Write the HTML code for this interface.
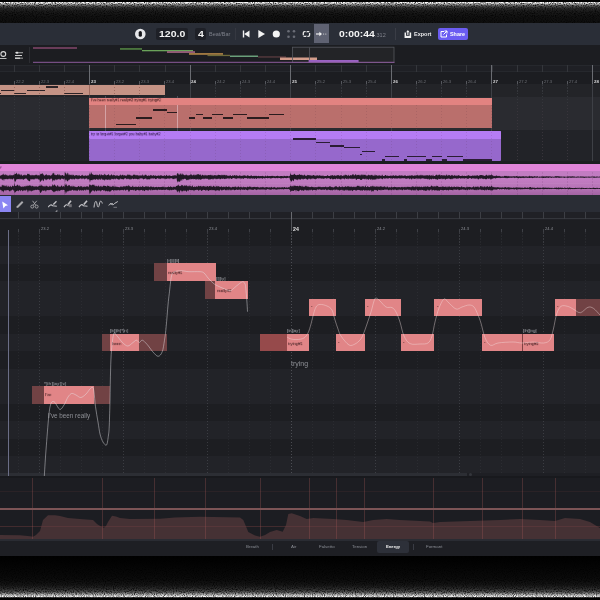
<!DOCTYPE html><html><head><meta charset="utf-8"><style>
html,body{margin:0;padding:0;width:600px;height:600px;overflow:hidden;background:#000;font-family:"Liberation Sans", sans-serif;}
div{box-sizing:border-box;}
</style></head><body><div style="position:relative;width:600px;height:600px;overflow:hidden;background:#000">
<div style="position:absolute;left:0;top:0;width:600px;height:23px;background:linear-gradient(to bottom,#000 0px,#000 1.8px,#ffffff 2.3px,#f0f0f0 3px,#b0b0b0 4px,#7a7a7a 5px,#4c4c4c 6.5px,#2e2e2e 8px,#1c1c1c 11px,#121212 16px,#0e0e0e 23px)"></div>
<svg style="position:absolute;left:0;top:0;mix-blend-mode:multiply" width="600" height="23"><filter id="nz1" x="0" y="0" width="100%" height="100%"><feTurbulence type="fractalNoise" baseFrequency="0.9" numOctaves="1" seed="3"/><feColorMatrix type="matrix" values="0 0 0 0 0  0 0 0 0 0  0 0 0 0 0  0 0 0 -2.2 1.3"/></filter><rect width="600" height="23" fill="#fff"/><rect width="600" height="23" filter="url(#nz1)" fill="#000"/></svg>
<div style="position:absolute;left:0px;top:23px;width:600px;height:22px;background:#2a2e37;"></div>
<svg style="position:absolute;left:0;top:0" width="600" height="600"><circle cx="140.3" cy="34" r="5.3" fill="#e6e7ea"/><rect x="138.7" y="31" width="3.2" height="5.8" rx="1.6" fill="#15161a"/><rect x="242.8" y="30.5" width="1.4" height="7" fill="#f0f0f0"/><path d="M249.5 30.5 L244.2 34 L249.5 37.5 Z" fill="#f0f0f0"/><path d="M258.3 30 L265 34 L258.3 38 Z" fill="#f4f4f4"/><circle cx="276.3" cy="34" r="3.6" fill="#f4f4f4"/><circle cx="288.5" cy="31.2" r="1.3" fill="#6a6d76"/><circle cx="294" cy="31.2" r="1.3" fill="#6a6d76"/><circle cx="288.5" cy="36.8" r="1.3" fill="#6a6d76"/><circle cx="294" cy="36.8" r="1.3" fill="#6a6d76"/><path d="M303.3 35.2 V33 Q303.3 31.7 304.6 31.7 H309.3" stroke="#e8e8e8" stroke-width="1.3" fill="none"/><path d="M309.6 32.9 V35.1 Q309.6 36.4 308.3 36.4 H303.5" stroke="#e8e8e8" stroke-width="1.3" fill="none"/><path d="M305 30.6 L306.6 31.7 L305 32.8" stroke="#2a2e37" stroke-width="0.8" fill="none"/><path d="M308 35.3 L306.4 36.4 L308 37.5" stroke="#2a2e37" stroke-width="0.8" fill="none"/></svg>
<div style="position:absolute;left:314px;top:24px;width:15px;height:19px;background:#5f6272;"></div>
<svg style="position:absolute;left:314px;top:24px" width="15" height="19"><path d="M2 10 H6.5" stroke="#f0f0f0" stroke-width="1.2"/><path d="M5.4 7.8 L8 10 L5.4 12.2 Z" fill="#f4f4f4"/><circle cx="9.6" cy="10" r="0.6" fill="#ddd"/><circle cx="11.8" cy="10" r="0.6" fill="#ddd"/></svg>
<div style="position:absolute;left:156px;top:28px;width:32px;height:12px;background:#1e2027;border-radius:2px"></div>
<div style="position:absolute;left:159.2px;top:29.4px;font-size:9.6px;line-height:9.6px;color:#f2f2f2;font-weight:bold;white-space:nowrap;will-change:transform;transform:scaleX(1.1);transform-origin:0 0;">120.0</div>
<div style="position:absolute;left:194.5px;top:28px;width:11.5px;height:12px;background:#1e2027;border-radius:2px"></div>
<div style="position:absolute;left:197.5px;top:29.4px;font-size:9.6px;line-height:9.6px;color:#f2f2f2;font-weight:bold;white-space:nowrap;will-change:transform;transform:scaleX(1.1);transform-origin:0 0;">4</div>
<div style="position:absolute;left:234.5px;top:28px;width:0.8px;height:12px;background:#353841;"></div>
<div style="position:absolute;left:208.5px;top:31.5px;font-size:5.5px;line-height:5.5px;color:#7d808a;font-weight:normal;white-space:nowrap;will-change:transform;">Beat/Bar</div>
<div style="position:absolute;left:339px;top:29.4px;font-size:9.6px;line-height:9.6px;color:#f4f4f4;font-weight:bold;white-space:nowrap;will-change:transform;transform:scaleX(1.085);transform-origin:0 0;">0:00:44</div>
<div style="position:absolute;left:375px;top:33px;font-size:5.5px;line-height:5.5px;color:#80838c;font-weight:normal;white-space:nowrap;will-change:transform;">.312</div>
<div style="position:absolute;left:395px;top:28px;width:1px;height:12px;background:#3a3d46;"></div>
<svg style="position:absolute;left:0;top:0" width="600" height="60"><path d="M405.3 32.6 V37.2 H410.4 V32.6" stroke="#f0f0f0" stroke-width="1.5" fill="none"/><rect x="405" y="35.8" width="5.8" height="2" fill="#f0f0f0"/><path d="M407.85 35 V31" stroke="#f0f0f0" stroke-width="1.1"/><path d="M406.2 32.2 L407.85 30 L409.5 32.2 Z" fill="#f0f0f0"/></svg>
<div style="position:absolute;left:413.7px;top:32px;font-size:5.5px;line-height:5.5px;color:#e8e8ea;font-weight:bold;white-space:nowrap;will-change:transform;">Export</div>
<div style="position:absolute;left:437.5px;top:28px;width:30.5px;height:12px;background:#6b5cf2;border-radius:2px"></div>
<svg style="position:absolute;left:440px;top:30px" width="8" height="8"><path d="M1 1.5 H4 M1 1.5 V7 H6.5 V4.5 M4.5 1 H7 V3.5 M7 1 L3.5 4.5" stroke="#fff" stroke-width="1" fill="none"/></svg>
<div style="position:absolute;left:450px;top:32px;font-size:5.4px;line-height:5.4px;color:#ffffff;font-weight:bold;white-space:nowrap;will-change:transform;">Share</div>
<div style="position:absolute;left:0px;top:45px;width:600px;height:20px;background:#1c1d21;"></div>
<svg style="position:absolute;left:0;top:45px" width="600" height="20"><circle cx="3.3" cy="9" r="2.4" stroke="#d8d8d8" stroke-width="1.1" fill="none"/><rect x="0" y="13" width="6.5" height="0.9" fill="#cfcfcf"/><rect x="15" y="7.3" width="8" height="0.9" fill="#bdbdbd"/><rect x="16" y="6.8" width="2.2" height="1.8" fill="#e0e0e0"/><rect x="15" y="10" width="7" height="1" fill="#cfcfcf"/><rect x="15" y="12.6" width="8" height="1.2" fill="#8d8d8d"/><rect x="15" y="12.6" width="5" height="1.2" fill="#dcdcdc"/><rect x="29" y="2" width="1" height="16" fill="#2c2d32"/><rect x="33" y="2.3" width="44" height="1.4" fill="#8a4a72"/><rect x="120" y="3.3" width="22" height="1.3" fill="#5e9a4a"/><rect x="142" y="5" width="51" height="1.3" fill="#6aa35a"/><rect x="167" y="6.3" width="28" height="1.5" fill="#b06a8c"/><rect x="189" y="8.2" width="34" height="1.5" fill="#c0904a"/><rect x="207.5" y="9.8" width="22.5" height="1.3" fill="#6e6a3a"/><rect x="230" y="10.5" width="28" height="1.5" fill="#6aa07a"/><rect x="258" y="11.3" width="28" height="1.3" fill="#5a3c40"/><rect x="280" y="12.5" width="37" height="2.5" fill="#d29a88"/><rect x="292.5" y="2.2" width="101.5" height="15.2" fill="rgba(255,255,255,0.03)" stroke="#55575e" stroke-width="0.8"/><rect x="309" y="2.5" width="0.8" height="15" fill="#55575e"/><rect x="308.6" y="15" width="50" height="2.4" fill="#9a62c4"/><rect x="33" y="16.8" width="361.5" height="1" fill="#8c5a9c"/></svg>
<div style="position:absolute;left:0px;top:65px;width:600px;height:7px;background:#1f2025;"></div>
<div style="position:absolute;left:0px;top:65.2px;width:600px;height:1px;background:#26282d;"></div>
<div style="position:absolute;left:0px;top:71px;width:600px;height:1px;background:#26282d;"></div>
<div style="position:absolute;left:13.65px;top:65px;width:0.8px;height:7px;background:#34363b;"></div>
<div style="position:absolute;left:38.800000000000004px;top:65px;width:0.8px;height:7px;background:#34363b;"></div>
<div style="position:absolute;left:63.949999999999996px;top:65px;width:0.8px;height:7px;background:#34363b;"></div>
<div style="position:absolute;left:89.09999999999998px;top:65px;width:0.8px;height:7px;background:#34363b;"></div>
<div style="position:absolute;left:114.24999999999999px;top:65px;width:0.8px;height:7px;background:#34363b;"></div>
<div style="position:absolute;left:139.4px;top:65px;width:0.8px;height:7px;background:#34363b;"></div>
<div style="position:absolute;left:164.54999999999998px;top:65px;width:0.8px;height:7px;background:#34363b;"></div>
<div style="position:absolute;left:189.7px;top:65px;width:0.8px;height:7px;background:#34363b;"></div>
<div style="position:absolute;left:214.85px;top:65px;width:0.8px;height:7px;background:#34363b;"></div>
<div style="position:absolute;left:240.0px;top:65px;width:0.8px;height:7px;background:#34363b;"></div>
<div style="position:absolute;left:265.15000000000003px;top:65px;width:0.8px;height:7px;background:#34363b;"></div>
<div style="position:absolute;left:290.3px;top:65px;width:0.8px;height:7px;background:#34363b;"></div>
<div style="position:absolute;left:315.45px;top:65px;width:0.8px;height:7px;background:#34363b;"></div>
<div style="position:absolute;left:340.6px;top:65px;width:0.8px;height:7px;background:#34363b;"></div>
<div style="position:absolute;left:365.75px;top:65px;width:0.8px;height:7px;background:#34363b;"></div>
<div style="position:absolute;left:390.90000000000003px;top:65px;width:0.8px;height:7px;background:#34363b;"></div>
<div style="position:absolute;left:416.05px;top:65px;width:0.8px;height:7px;background:#34363b;"></div>
<div style="position:absolute;left:441.2px;top:65px;width:0.8px;height:7px;background:#34363b;"></div>
<div style="position:absolute;left:466.35px;top:65px;width:0.8px;height:7px;background:#34363b;"></div>
<div style="position:absolute;left:491.5px;top:65px;width:0.8px;height:7px;background:#34363b;"></div>
<div style="position:absolute;left:516.65px;top:65px;width:0.8px;height:7px;background:#34363b;"></div>
<div style="position:absolute;left:541.8px;top:65px;width:0.8px;height:7px;background:#34363b;"></div>
<div style="position:absolute;left:566.9499999999999px;top:65px;width:0.8px;height:7px;background:#34363b;"></div>
<div style="position:absolute;left:592.0999999999999px;top:65px;width:0.8px;height:7px;background:#34363b;"></div>
<div style="position:absolute;left:0px;top:72px;width:600px;height:12px;background:#1c1d21;"></div>
<div style="position:absolute;left:13.550000000000004px;top:81px;width:1px;height:3px;background:#55575d;"></div>
<div style="position:absolute;left:15.550000000000004px;top:79.9px;font-size:4.2px;line-height:4.2px;color:#6c6e74;font-weight:normal;white-space:nowrap;will-change:transform;">22.2</div>
<div style="position:absolute;left:38.7px;top:81px;width:1px;height:3px;background:#55575d;"></div>
<div style="position:absolute;left:40.7px;top:79.9px;font-size:4.2px;line-height:4.2px;color:#6c6e74;font-weight:normal;white-space:nowrap;will-change:transform;">22.3</div>
<div style="position:absolute;left:63.849999999999994px;top:81px;width:1px;height:3px;background:#55575d;"></div>
<div style="position:absolute;left:65.85px;top:79.9px;font-size:4.2px;line-height:4.2px;color:#6c6e74;font-weight:normal;white-space:nowrap;will-change:transform;">22.4</div>
<div style="position:absolute;left:89.0px;top:65px;width:1px;height:19px;background:#6a6c72;"></div>
<div style="position:absolute;left:90.7px;top:79.8px;font-size:4.4px;line-height:4.4px;color:#d8d8da;font-weight:bold;white-space:nowrap;will-change:transform;">23</div>
<div style="position:absolute;left:114.15px;top:81px;width:1px;height:3px;background:#55575d;"></div>
<div style="position:absolute;left:116.15px;top:79.9px;font-size:4.2px;line-height:4.2px;color:#6c6e74;font-weight:normal;white-space:nowrap;will-change:transform;">23.2</div>
<div style="position:absolute;left:139.3px;top:81px;width:1px;height:3px;background:#55575d;"></div>
<div style="position:absolute;left:141.3px;top:79.9px;font-size:4.2px;line-height:4.2px;color:#6c6e74;font-weight:normal;white-space:nowrap;will-change:transform;">23.3</div>
<div style="position:absolute;left:164.45px;top:81px;width:1px;height:3px;background:#55575d;"></div>
<div style="position:absolute;left:166.45px;top:79.9px;font-size:4.2px;line-height:4.2px;color:#6c6e74;font-weight:normal;white-space:nowrap;will-change:transform;">23.4</div>
<div style="position:absolute;left:189.6px;top:65px;width:1px;height:19px;background:#6a6c72;"></div>
<div style="position:absolute;left:191.29999999999998px;top:79.8px;font-size:4.4px;line-height:4.4px;color:#d8d8da;font-weight:bold;white-space:nowrap;will-change:transform;">24</div>
<div style="position:absolute;left:214.75px;top:81px;width:1px;height:3px;background:#55575d;"></div>
<div style="position:absolute;left:216.75px;top:79.9px;font-size:4.2px;line-height:4.2px;color:#6c6e74;font-weight:normal;white-space:nowrap;will-change:transform;">24.2</div>
<div style="position:absolute;left:239.89999999999998px;top:81px;width:1px;height:3px;background:#55575d;"></div>
<div style="position:absolute;left:241.89999999999998px;top:79.9px;font-size:4.2px;line-height:4.2px;color:#6c6e74;font-weight:normal;white-space:nowrap;will-change:transform;">24.3</div>
<div style="position:absolute;left:265.04999999999995px;top:81px;width:1px;height:3px;background:#55575d;"></div>
<div style="position:absolute;left:267.04999999999995px;top:79.9px;font-size:4.2px;line-height:4.2px;color:#6c6e74;font-weight:normal;white-space:nowrap;will-change:transform;">24.4</div>
<div style="position:absolute;left:290.2px;top:65px;width:1px;height:19px;background:#6a6c72;"></div>
<div style="position:absolute;left:291.9px;top:79.8px;font-size:4.4px;line-height:4.4px;color:#d8d8da;font-weight:bold;white-space:nowrap;will-change:transform;">25</div>
<div style="position:absolute;left:315.34999999999997px;top:81px;width:1px;height:3px;background:#55575d;"></div>
<div style="position:absolute;left:317.34999999999997px;top:79.9px;font-size:4.2px;line-height:4.2px;color:#6c6e74;font-weight:normal;white-space:nowrap;will-change:transform;">25.2</div>
<div style="position:absolute;left:340.5px;top:81px;width:1px;height:3px;background:#55575d;"></div>
<div style="position:absolute;left:342.5px;top:79.9px;font-size:4.2px;line-height:4.2px;color:#6c6e74;font-weight:normal;white-space:nowrap;will-change:transform;">25.3</div>
<div style="position:absolute;left:365.65px;top:81px;width:1px;height:3px;background:#55575d;"></div>
<div style="position:absolute;left:367.65px;top:79.9px;font-size:4.2px;line-height:4.2px;color:#6c6e74;font-weight:normal;white-space:nowrap;will-change:transform;">25.4</div>
<div style="position:absolute;left:390.79999999999995px;top:65px;width:1px;height:19px;background:#6a6c72;"></div>
<div style="position:absolute;left:392.49999999999994px;top:79.8px;font-size:4.4px;line-height:4.4px;color:#d8d8da;font-weight:bold;white-space:nowrap;will-change:transform;">26</div>
<div style="position:absolute;left:415.94999999999993px;top:81px;width:1px;height:3px;background:#55575d;"></div>
<div style="position:absolute;left:417.94999999999993px;top:79.9px;font-size:4.2px;line-height:4.2px;color:#6c6e74;font-weight:normal;white-space:nowrap;will-change:transform;">26.2</div>
<div style="position:absolute;left:441.09999999999997px;top:81px;width:1px;height:3px;background:#55575d;"></div>
<div style="position:absolute;left:443.09999999999997px;top:79.9px;font-size:4.2px;line-height:4.2px;color:#6c6e74;font-weight:normal;white-space:nowrap;will-change:transform;">26.3</div>
<div style="position:absolute;left:466.24999999999994px;top:81px;width:1px;height:3px;background:#55575d;"></div>
<div style="position:absolute;left:468.24999999999994px;top:79.9px;font-size:4.2px;line-height:4.2px;color:#6c6e74;font-weight:normal;white-space:nowrap;will-change:transform;">26.4</div>
<div style="position:absolute;left:491.4px;top:65px;width:1px;height:19px;background:#6a6c72;"></div>
<div style="position:absolute;left:493.09999999999997px;top:79.8px;font-size:4.4px;line-height:4.4px;color:#d8d8da;font-weight:bold;white-space:nowrap;will-change:transform;">27</div>
<div style="position:absolute;left:516.55px;top:81px;width:1px;height:3px;background:#55575d;"></div>
<div style="position:absolute;left:518.55px;top:79.9px;font-size:4.2px;line-height:4.2px;color:#6c6e74;font-weight:normal;white-space:nowrap;will-change:transform;">27.2</div>
<div style="position:absolute;left:541.6999999999999px;top:81px;width:1px;height:3px;background:#55575d;"></div>
<div style="position:absolute;left:543.6999999999999px;top:79.9px;font-size:4.2px;line-height:4.2px;color:#6c6e74;font-weight:normal;white-space:nowrap;will-change:transform;">27.3</div>
<div style="position:absolute;left:566.8499999999999px;top:81px;width:1px;height:3px;background:#55575d;"></div>
<div style="position:absolute;left:568.8499999999999px;top:79.9px;font-size:4.2px;line-height:4.2px;color:#6c6e74;font-weight:normal;white-space:nowrap;will-change:transform;">27.4</div>
<div style="position:absolute;left:592.0px;top:65px;width:1px;height:19px;background:#6a6c72;"></div>
<div style="position:absolute;left:593.7px;top:79.8px;font-size:4.4px;line-height:4.4px;color:#d8d8da;font-weight:bold;white-space:nowrap;will-change:transform;">28</div>
<div style="position:absolute;left:0px;top:84px;width:600px;height:12.5px;background:#232428;"></div>
<div style="position:absolute;left:0px;top:96.5px;width:600px;height:33.5px;background:#2a2b30;"></div>
<div style="position:absolute;left:0px;top:130px;width:600px;height:33px;background:#222328;"></div>
<div style="position:absolute;left:13.550000000000004px;top:84px;width:1px;height:79px;background:repeating-linear-gradient(to bottom,#35373c 0 1.5px,transparent 1.5px 3px)"></div>
<div style="position:absolute;left:38.7px;top:84px;width:1px;height:79px;background:repeating-linear-gradient(to bottom,#35373c 0 1.5px,transparent 1.5px 3px)"></div>
<div style="position:absolute;left:63.849999999999994px;top:84px;width:1px;height:79px;background:repeating-linear-gradient(to bottom,#35373c 0 1.5px,transparent 1.5px 3px)"></div>
<div style="position:absolute;left:89.0px;top:84px;width:1px;height:79px;background:#3e4046;"></div>
<div style="position:absolute;left:114.15px;top:84px;width:1px;height:79px;background:repeating-linear-gradient(to bottom,#35373c 0 1.5px,transparent 1.5px 3px)"></div>
<div style="position:absolute;left:139.3px;top:84px;width:1px;height:79px;background:repeating-linear-gradient(to bottom,#35373c 0 1.5px,transparent 1.5px 3px)"></div>
<div style="position:absolute;left:164.45px;top:84px;width:1px;height:79px;background:repeating-linear-gradient(to bottom,#35373c 0 1.5px,transparent 1.5px 3px)"></div>
<div style="position:absolute;left:189.6px;top:84px;width:1px;height:79px;background:#3e4046;"></div>
<div style="position:absolute;left:214.75px;top:84px;width:1px;height:79px;background:repeating-linear-gradient(to bottom,#35373c 0 1.5px,transparent 1.5px 3px)"></div>
<div style="position:absolute;left:239.89999999999998px;top:84px;width:1px;height:79px;background:repeating-linear-gradient(to bottom,#35373c 0 1.5px,transparent 1.5px 3px)"></div>
<div style="position:absolute;left:265.04999999999995px;top:84px;width:1px;height:79px;background:repeating-linear-gradient(to bottom,#35373c 0 1.5px,transparent 1.5px 3px)"></div>
<div style="position:absolute;left:290.2px;top:84px;width:1px;height:79px;background:#3e4046;"></div>
<div style="position:absolute;left:315.34999999999997px;top:84px;width:1px;height:79px;background:repeating-linear-gradient(to bottom,#35373c 0 1.5px,transparent 1.5px 3px)"></div>
<div style="position:absolute;left:340.5px;top:84px;width:1px;height:79px;background:repeating-linear-gradient(to bottom,#35373c 0 1.5px,transparent 1.5px 3px)"></div>
<div style="position:absolute;left:365.65px;top:84px;width:1px;height:79px;background:repeating-linear-gradient(to bottom,#35373c 0 1.5px,transparent 1.5px 3px)"></div>
<div style="position:absolute;left:390.79999999999995px;top:84px;width:1px;height:79px;background:#3e4046;"></div>
<div style="position:absolute;left:415.94999999999993px;top:84px;width:1px;height:79px;background:repeating-linear-gradient(to bottom,#35373c 0 1.5px,transparent 1.5px 3px)"></div>
<div style="position:absolute;left:441.09999999999997px;top:84px;width:1px;height:79px;background:repeating-linear-gradient(to bottom,#35373c 0 1.5px,transparent 1.5px 3px)"></div>
<div style="position:absolute;left:466.24999999999994px;top:84px;width:1px;height:79px;background:repeating-linear-gradient(to bottom,#35373c 0 1.5px,transparent 1.5px 3px)"></div>
<div style="position:absolute;left:491.4px;top:84px;width:1px;height:79px;background:#3e4046;"></div>
<div style="position:absolute;left:516.55px;top:84px;width:1px;height:79px;background:repeating-linear-gradient(to bottom,#35373c 0 1.5px,transparent 1.5px 3px)"></div>
<div style="position:absolute;left:541.6999999999999px;top:84px;width:1px;height:79px;background:repeating-linear-gradient(to bottom,#35373c 0 1.5px,transparent 1.5px 3px)"></div>
<div style="position:absolute;left:566.8499999999999px;top:84px;width:1px;height:79px;background:repeating-linear-gradient(to bottom,#35373c 0 1.5px,transparent 1.5px 3px)"></div>
<div style="position:absolute;left:592.0px;top:84px;width:1px;height:79px;background:#3e4046;"></div>
<div style="position:absolute;left:0px;top:85px;width:165px;height:9.8px;background:#c59385;"></div>
<div style="position:absolute;left:0px;top:92.75px;width:1.2px;height:1.5px;background:#2c2326;"></div>
<div style="position:absolute;left:1.3px;top:89.85px;width:12.7px;height:1.5px;background:#2c2326;"></div>
<div style="position:absolute;left:14px;top:92.75px;width:12px;height:1.5px;background:#2c2326;"></div>
<div style="position:absolute;left:27px;top:89.85px;width:18px;height:1.5px;background:#2c2326;"></div>
<div style="position:absolute;left:46px;top:86.35px;width:12px;height:1.5px;background:#2c2326;"></div>
<div style="position:absolute;left:64.4px;top:92.75px;width:18.599999999999994px;height:1.5px;background:#2c2326;"></div>
<div style="position:absolute;left:13.5px;top:84.4px;width:1px;height:10.6px;background:repeating-linear-gradient(to bottom,rgba(120,70,60,0.5) 0 1.5px,transparent 1.5px 3px)"></div>
<div style="position:absolute;left:38.5px;top:84.4px;width:1px;height:10.6px;background:repeating-linear-gradient(to bottom,rgba(120,70,60,0.5) 0 1.5px,transparent 1.5px 3px)"></div>
<div style="position:absolute;left:63.5px;top:84.4px;width:1px;height:10.6px;background:repeating-linear-gradient(to bottom,rgba(120,70,60,0.5) 0 1.5px,transparent 1.5px 3px)"></div>
<div style="position:absolute;left:114.0px;top:84.4px;width:1px;height:10.6px;background:repeating-linear-gradient(to bottom,rgba(120,70,60,0.5) 0 1.5px,transparent 1.5px 3px)"></div>
<div style="position:absolute;left:139.0px;top:84.4px;width:1px;height:10.6px;background:repeating-linear-gradient(to bottom,rgba(120,70,60,0.5) 0 1.5px,transparent 1.5px 3px)"></div>
<div style="position:absolute;left:89px;top:85px;width:1px;height:9.8px;background:rgba(120,70,60,0.5);"></div>
<div style="position:absolute;left:89px;top:97.8px;width:403px;height:30.4px;background:#ba6f6c;"></div>
<div style="position:absolute;left:89px;top:97.8px;width:403px;height:7.4px;background:#e28381;"></div>
<div style="position:absolute;left:90.5px;top:99.4px;font-size:4.6px;line-height:4.6px;color:#2a1010;font-weight:normal;white-space:nowrap;will-change:transform;transform:scale(0.79);transform-origin:0 0;">I've been really#1 really#2 trying#1 trying#2</div>
<div style="position:absolute;left:105.1px;top:95.5px;width:1px;height:2.5px;background:#4a4c58;"></div>
<div style="position:absolute;left:105.1px;top:128.4px;width:1px;height:2.6px;background:#4a4c58;"></div>
<div style="position:absolute;left:105.1px;top:105.2px;width:1px;height:23.2px;background:rgba(245,225,235,0.45);"></div>
<div style="position:absolute;left:177.1px;top:95.5px;width:1px;height:2.5px;background:#4a4c58;"></div>
<div style="position:absolute;left:177.1px;top:128.4px;width:1px;height:2.6px;background:#4a4c58;"></div>
<div style="position:absolute;left:177.1px;top:105.2px;width:1px;height:23.2px;background:rgba(245,225,235,0.45);"></div>
<div style="position:absolute;left:116px;top:123.8px;width:20px;height:1.6px;background:#2a1c1e;"></div>
<div style="position:absolute;left:136px;top:117.2px;width:16px;height:1.6px;background:#2a1c1e;"></div>
<div style="position:absolute;left:153px;top:109.2px;width:14px;height:1.6px;background:#2a1c1e;"></div>
<div style="position:absolute;left:167px;top:111.8px;width:10px;height:1.6px;background:#2a1c1e;"></div>
<div style="position:absolute;left:188.5px;top:117.2px;width:6.699999999999989px;height:1.6px;background:#2a1c1e;"></div>
<div style="position:absolute;left:195.5px;top:113.7px;width:7.5px;height:1.6px;background:#2a1c1e;"></div>
<div style="position:absolute;left:203px;top:117.2px;width:9px;height:1.6px;background:#2a1c1e;"></div>
<div style="position:absolute;left:212px;top:113.7px;width:11px;height:1.6px;background:#2a1c1e;"></div>
<div style="position:absolute;left:223px;top:117.2px;width:10px;height:1.6px;background:#2a1c1e;"></div>
<div style="position:absolute;left:233px;top:113.7px;width:14px;height:1.6px;background:#2a1c1e;"></div>
<div style="position:absolute;left:247px;top:117.2px;width:22px;height:1.6px;background:#2a1c1e;"></div>
<div style="position:absolute;left:269px;top:113.7px;width:15px;height:1.6px;background:#2a1c1e;"></div>
<div style="position:absolute;left:89px;top:131px;width:412px;height:30px;background:#9668cc;border-radius:1px"></div>
<div style="position:absolute;left:89px;top:131px;width:412px;height:7.5px;background:#b57cf4;border-radius:1px 1px 0 0"></div>
<div style="position:absolute;left:90.5px;top:132.8px;font-size:4.6px;line-height:4.6px;color:#1e0c30;font-weight:normal;white-space:nowrap;will-change:transform;transform:scale(0.79);transform-origin:0 0;">try to forget#1 forget#2 you baby#1 baby#2</div>
<div style="position:absolute;left:292.5px;top:138.2px;width:23.0px;height:1.6px;background:#2a1c34;"></div>
<div style="position:absolute;left:315.5px;top:141.7px;width:14.5px;height:1.6px;background:#2a1c34;"></div>
<div style="position:absolute;left:330px;top:145.0px;width:13.5px;height:1.6px;background:#2a1c34;"></div>
<div style="position:absolute;left:344px;top:146.89999999999998px;width:16px;height:1.6px;background:#2a1c34;"></div>
<div style="position:absolute;left:360px;top:153.79999999999998px;width:1.5px;height:1.6px;background:#2a1c34;"></div>
<div style="position:absolute;left:362.4px;top:150.7px;width:12.600000000000023px;height:1.6px;background:#2a1c34;"></div>
<div style="position:absolute;left:381.6px;top:159.2px;width:3.3999999999999773px;height:1.6px;background:#2a1c34;"></div>
<div style="position:absolute;left:385px;top:155.89999999999998px;width:14px;height:1.6px;background:#2a1c34;"></div>
<div style="position:absolute;left:404px;top:159.2px;width:3px;height:1.6px;background:#2a1c34;"></div>
<div style="position:absolute;left:407px;top:155.89999999999998px;width:19px;height:1.6px;background:#2a1c34;"></div>
<div style="position:absolute;left:426px;top:159.2px;width:6px;height:1.6px;background:#2a1c34;"></div>
<div style="position:absolute;left:432px;top:155.89999999999998px;width:10px;height:1.6px;background:#2a1c34;"></div>
<div style="position:absolute;left:442px;top:159.2px;width:5px;height:1.6px;background:#2a1c34;"></div>
<div style="position:absolute;left:447px;top:155.89999999999998px;width:16px;height:1.6px;background:#2a1c34;"></div>
<div style="position:absolute;left:463px;top:159.2px;width:29px;height:1.6px;background:#2a1c34;"></div>
<div style="position:absolute;left:89.0px;top:105px;width:1px;height:56px;background:repeating-linear-gradient(to bottom,rgba(80,40,60,0.14) 0 1.5px,transparent 1.5px 3px)"></div>
<div style="position:absolute;left:114.15px;top:105px;width:1px;height:56px;background:repeating-linear-gradient(to bottom,rgba(80,40,60,0.14) 0 1.5px,transparent 1.5px 3px)"></div>
<div style="position:absolute;left:139.3px;top:105px;width:1px;height:56px;background:repeating-linear-gradient(to bottom,rgba(80,40,60,0.14) 0 1.5px,transparent 1.5px 3px)"></div>
<div style="position:absolute;left:164.45px;top:105px;width:1px;height:56px;background:repeating-linear-gradient(to bottom,rgba(80,40,60,0.14) 0 1.5px,transparent 1.5px 3px)"></div>
<div style="position:absolute;left:189.6px;top:105px;width:1px;height:56px;background:repeating-linear-gradient(to bottom,rgba(80,40,60,0.14) 0 1.5px,transparent 1.5px 3px)"></div>
<div style="position:absolute;left:214.75px;top:105px;width:1px;height:56px;background:repeating-linear-gradient(to bottom,rgba(80,40,60,0.14) 0 1.5px,transparent 1.5px 3px)"></div>
<div style="position:absolute;left:239.89999999999998px;top:105px;width:1px;height:56px;background:repeating-linear-gradient(to bottom,rgba(80,40,60,0.14) 0 1.5px,transparent 1.5px 3px)"></div>
<div style="position:absolute;left:265.04999999999995px;top:105px;width:1px;height:56px;background:repeating-linear-gradient(to bottom,rgba(80,40,60,0.14) 0 1.5px,transparent 1.5px 3px)"></div>
<div style="position:absolute;left:290.2px;top:105px;width:1px;height:56px;background:repeating-linear-gradient(to bottom,rgba(80,40,60,0.14) 0 1.5px,transparent 1.5px 3px)"></div>
<div style="position:absolute;left:315.34999999999997px;top:105px;width:1px;height:56px;background:repeating-linear-gradient(to bottom,rgba(80,40,60,0.14) 0 1.5px,transparent 1.5px 3px)"></div>
<div style="position:absolute;left:340.5px;top:105px;width:1px;height:56px;background:repeating-linear-gradient(to bottom,rgba(80,40,60,0.14) 0 1.5px,transparent 1.5px 3px)"></div>
<div style="position:absolute;left:365.65px;top:105px;width:1px;height:56px;background:repeating-linear-gradient(to bottom,rgba(80,40,60,0.14) 0 1.5px,transparent 1.5px 3px)"></div>
<div style="position:absolute;left:390.79999999999995px;top:105px;width:1px;height:56px;background:repeating-linear-gradient(to bottom,rgba(80,40,60,0.14) 0 1.5px,transparent 1.5px 3px)"></div>
<div style="position:absolute;left:415.94999999999993px;top:105px;width:1px;height:56px;background:repeating-linear-gradient(to bottom,rgba(80,40,60,0.14) 0 1.5px,transparent 1.5px 3px)"></div>
<div style="position:absolute;left:441.09999999999997px;top:105px;width:1px;height:56px;background:repeating-linear-gradient(to bottom,rgba(80,40,60,0.14) 0 1.5px,transparent 1.5px 3px)"></div>
<div style="position:absolute;left:466.24999999999994px;top:105px;width:1px;height:56px;background:repeating-linear-gradient(to bottom,rgba(80,40,60,0.14) 0 1.5px,transparent 1.5px 3px)"></div>
<div style="position:absolute;left:491.4px;top:105px;width:1px;height:56px;background:repeating-linear-gradient(to bottom,rgba(80,40,60,0.14) 0 1.5px,transparent 1.5px 3px)"></div>
<div style="position:absolute;left:516.55px;top:105px;width:1px;height:56px;background:repeating-linear-gradient(to bottom,rgba(80,40,60,0.14) 0 1.5px,transparent 1.5px 3px)"></div>
<div style="position:absolute;left:541.6999999999999px;top:105px;width:1px;height:56px;background:repeating-linear-gradient(to bottom,rgba(80,40,60,0.14) 0 1.5px,transparent 1.5px 3px)"></div>
<div style="position:absolute;left:566.8499999999999px;top:105px;width:1px;height:56px;background:repeating-linear-gradient(to bottom,rgba(80,40,60,0.14) 0 1.5px,transparent 1.5px 3px)"></div>
<div style="position:absolute;left:0px;top:161px;width:600px;height:2.5px;background:#1c1d21;"></div>
<div style="position:absolute;left:0px;top:163.5px;width:600px;height:31.5px;background:linear-gradient(to bottom,#c27cc2 0px,#c27cc2 16px,#b674b6 24px,#a262a2 31.5px);"></div>
<div style="position:absolute;left:0px;top:163.8px;width:600px;height:7.4px;background:#e084d8;"></div>
<div style="position:absolute;left:0px;top:182.8px;width:600px;height:0.8px;background:rgba(255,255,255,0.05);"></div>
<svg style="position:absolute;left:0;top:166px" width="4" height="4"><path d="M-1 0.6 H2 L0.5 3 Z" fill="#9a5a9a"/></svg>
<svg style="position:absolute;left:0;top:0" width="600" height="600"><path d="M0.0 175.0 L0.5 176.0 L1.0 175.2 L1.5 175.2 L2.0 174.7 L2.5 174.3 L3.0 175.2 L3.5 173.2 L4.0 175.0 L4.5 175.2 L5.0 174.0 L5.5 174.5 L6.0 175.4 L6.5 174.9 L7.0 174.6 L7.5 175.7 L8.0 175.6 L8.5 175.8 L9.0 175.2 L9.5 175.5 L10.0 174.2 L10.5 175.3 L11.0 175.7 L11.5 175.1 L12.0 175.3 L12.5 175.6 L13.0 174.7 L13.5 174.8 L14.0 175.4 L14.5 174.0 L15.0 173.7 L15.5 174.1 L16.0 173.8 L16.5 172.5 L17.0 173.8 L17.5 175.0 L18.0 173.4 L18.5 173.8 L19.0 174.9 L19.5 173.4 L20.0 175.4 L20.5 175.2 L21.0 173.8 L21.5 174.7 L22.0 175.6 L22.5 175.7 L23.0 175.5 L23.5 174.7 L24.0 175.5 L24.5 175.0 L25.0 174.2 L25.5 175.4 L26.0 174.9 L26.5 175.5 L27.0 174.8 L27.5 173.5 L28.0 173.9 L28.5 174.2 L29.0 173.6 L29.5 174.6 L30.0 175.3 L30.5 175.2 L31.0 175.3 L31.5 175.5 L32.0 174.4 L32.5 175.4 L33.0 175.0 L33.5 175.3 L34.0 175.5 L34.5 175.3 L35.0 174.9 L35.5 175.3 L36.0 174.3 L36.5 175.3 L37.0 174.6 L37.5 175.8 L38.0 175.1 L38.5 175.2 L39.0 175.5 L39.5 175.5 L40.0 174.0 L40.5 174.4 L41.0 173.2 L41.5 174.1 L42.0 174.0 L42.5 172.7 L43.0 174.4 L43.5 174.3 L44.0 175.4 L44.5 175.5 L45.0 175.4 L45.5 174.4 L46.0 175.1 L46.5 173.8 L47.0 175.4 L47.5 175.1 L48.0 175.4 L48.5 175.3 L49.0 174.8 L49.5 175.6 L50.0 175.1 L50.5 175.8 L51.0 175.7 L51.5 174.4 L52.0 175.6 L52.5 173.3 L53.0 173.6 L53.5 173.3 L54.0 172.5 L54.5 175.1 L55.0 174.7 L55.5 174.7 L56.0 175.4 L56.5 174.9 L57.0 175.1 L57.5 174.6 L58.0 173.7 L58.5 174.9 L59.0 175.5 L59.5 174.0 L60.0 175.4 L60.5 175.1 L61.0 175.7 L61.5 175.3 L62.0 175.3 L62.5 175.0 L63.0 175.1 L63.5 175.7 L64.0 175.9 L64.5 175.8 L65.0 171.6 L65.5 173.5 L66.0 173.1 L66.5 174.3 L67.0 175.0 L67.5 172.7 L68.0 172.8 L68.5 174.5 L69.0 175.4 L69.5 174.1 L70.0 175.4 L70.5 174.7 L71.0 174.7 L71.5 175.6 L72.0 173.9 L72.5 175.3 L73.0 175.5 L73.5 174.6 L74.0 175.3 L74.5 175.8 L75.0 175.7 L75.5 175.3 L76.0 175.0 L76.5 175.2 L77.0 175.1 L77.5 175.7 L78.0 175.3 L78.5 175.4 L79.0 175.5 L79.5 175.0 L80.0 176.0 L80.5 176.0 L81.0 175.7 L81.5 175.0 L82.0 175.7 L82.5 174.5 L83.0 175.5 L83.5 175.9 L84.0 175.6 L84.5 175.7 L85.0 175.7 L85.5 175.3 L86.0 175.5 L86.5 175.7 L87.0 175.9 L87.5 175.3 L88.0 175.5 L88.5 175.3 L89.0 175.6 L89.5 173.3 L90.0 173.9 L90.5 174.7 L91.0 171.7 L91.5 172.9 L92.0 174.0 L92.5 174.0 L93.0 175.2 L93.5 174.4 L94.0 174.9 L94.5 174.9 L95.0 174.7 L95.5 174.9 L96.0 174.2 L96.5 175.5 L97.0 174.2 L97.5 174.9 L98.0 174.9 L98.5 175.6 L99.0 174.9 L99.5 174.5 L100.0 173.8 L100.5 175.5 L101.0 175.4 L101.5 173.9 L102.0 174.9 L102.5 175.2 L103.0 175.1 L103.5 174.8 L104.0 175.7 L104.5 173.7 L105.0 173.9 L105.5 175.1 L106.0 175.2 L106.5 175.6 L107.0 174.9 L107.5 174.9 L108.0 174.8 L108.5 173.8 L109.0 175.2 L109.5 175.5 L110.0 175.2 L110.5 175.5 L111.0 175.0 L111.5 174.0 L112.0 174.9 L112.5 175.5 L113.0 175.4 L113.5 174.4 L114.0 175.4 L114.5 175.1 L115.0 175.3 L115.5 175.9 L116.0 175.3 L116.5 175.7 L117.0 175.1 L117.5 175.6 L118.0 175.7 L118.5 175.8 L119.0 175.9 L119.5 175.5 L120.0 174.9 L120.5 174.3 L121.0 175.8 L121.5 175.4 L122.0 174.7 L122.5 174.9 L123.0 174.4 L123.5 175.8 L124.0 175.3 L124.5 175.3 L125.0 175.2 L125.5 175.9 L126.0 175.1 L126.5 175.7 L127.0 175.7 L127.5 174.1 L128.0 175.2 L128.5 174.9 L129.0 174.1 L129.5 175.2 L130.0 174.7 L130.5 175.3 L131.0 175.8 L131.5 175.7 L132.0 175.1 L132.5 175.9 L133.0 175.2 L133.5 174.5 L134.0 174.7 L134.5 174.8 L135.0 174.6 L135.5 175.2 L136.0 175.4 L136.5 175.2 L137.0 174.7 L137.5 175.2 L138.0 175.6 L138.5 175.6 L139.0 175.6 L139.5 175.6 L140.0 175.6 L140.5 175.8 L141.0 174.7 L141.5 175.4 L142.0 176.0 L142.5 174.0 L143.0 175.5 L143.5 175.4 L144.0 175.7 L144.5 175.4 L145.0 174.4 L145.5 175.1 L146.0 174.5 L146.5 175.4 L147.0 175.6 L147.5 175.9 L148.0 175.9 L148.5 175.3 L149.0 175.5 L149.5 175.7 L150.0 175.7 L150.5 174.7 L151.0 175.6 L151.5 175.0 L152.0 176.0 L152.5 175.8 L153.0 175.3 L153.5 175.1 L154.0 175.7 L154.5 175.7 L155.0 175.4 L155.5 175.3 L156.0 176.1 L156.5 176.0 L157.0 175.6 L157.5 175.8 L158.0 176.0 L158.5 174.9 L159.0 176.1 L159.5 175.8 L160.0 175.2 L160.5 175.4 L161.0 175.3 L161.5 175.5 L162.0 175.4 L162.5 175.9 L163.0 175.8 L163.5 175.7 L164.0 176.0 L164.5 174.8 L165.0 175.9 L165.5 175.7 L166.0 175.8 L166.5 174.8 L167.0 174.9 L167.5 176.1 L168.0 176.0 L168.5 175.5 L169.0 175.5 L169.5 175.6 L170.0 175.3 L170.5 175.9 L171.0 176.0 L171.5 176.1 L172.0 176.0 L172.5 175.4 L173.0 175.6 L173.5 175.8 L174.0 174.9 L174.5 175.8 L175.0 174.8 L175.5 175.6 L176.0 175.4 L176.5 175.9 L177.0 173.5 L177.5 173.6 L178.0 172.7 L178.5 174.4 L179.0 174.6 L179.5 175.1 L180.0 173.3 L180.5 173.6 L181.0 174.7 L181.5 174.8 L182.0 173.0 L182.5 173.9 L183.0 174.9 L183.5 174.0 L184.0 175.3 L184.5 175.1 L185.0 175.4 L185.5 174.5 L186.0 175.5 L186.5 174.3 L187.0 174.9 L187.5 175.3 L188.0 175.7 L188.5 175.2 L189.0 175.2 L189.5 175.3 L190.0 175.1 L190.5 174.1 L191.0 175.0 L191.5 173.9 L192.0 175.4 L192.5 175.3 L193.0 175.3 L193.5 175.1 L194.0 174.1 L194.5 175.3 L195.0 175.5 L195.5 175.1 L196.0 174.6 L196.5 174.6 L197.0 175.4 L197.5 174.1 L198.0 174.1 L198.5 174.1 L199.0 175.0 L199.5 174.4 L200.0 175.1 L200.5 174.1 L201.0 175.6 L201.5 175.9 L202.0 174.6 L202.5 175.0 L203.0 174.7 L203.5 175.6 L204.0 175.4 L204.5 175.4 L205.0 174.6 L205.5 175.5 L206.0 175.2 L206.5 175.4 L207.0 175.2 L207.5 175.6 L208.0 175.2 L208.5 175.1 L209.0 175.1 L209.5 175.1 L210.0 175.5 L210.5 174.5 L211.0 175.2 L211.5 175.4 L212.0 174.5 L212.5 175.7 L213.0 175.3 L213.5 175.5 L214.0 175.8 L214.5 175.1 L215.0 175.0 L215.5 175.5 L216.0 175.1 L216.5 175.5 L217.0 175.8 L217.5 175.3 L218.0 174.7 L218.5 174.8 L219.0 174.9 L219.5 174.9 L220.0 175.1 L220.5 175.0 L221.0 175.7 L221.5 174.9 L222.0 174.5 L222.5 175.4 L223.0 174.7 L223.5 175.4 L224.0 174.6 L224.5 175.2 L225.0 174.7 L225.5 175.7 L226.0 174.8 L226.5 175.2 L227.0 175.4 L227.5 175.8 L228.0 175.6 L228.5 175.7 L229.0 176.0 L229.5 175.6 L230.0 175.6 L230.5 175.0 L231.0 175.9 L231.5 176.0 L232.0 176.0 L232.5 175.0 L233.0 175.8 L233.5 175.7 L234.0 175.6 L234.5 174.9 L235.0 175.3 L235.5 176.0 L236.0 174.9 L236.5 175.4 L237.0 175.2 L237.5 175.9 L238.0 175.5 L238.5 176.0 L239.0 176.2 L239.5 175.0 L240.0 175.5 L240.5 176.1 L241.0 175.5 L241.5 176.0 L242.0 176.0 L242.5 176.0 L243.0 175.1 L243.5 176.0 L244.0 175.1 L244.5 175.7 L245.0 175.0 L245.5 175.8 L246.0 176.2 L246.5 176.2 L247.0 175.3 L247.5 175.1 L248.0 176.2 L248.5 175.3 L249.0 176.0 L249.5 176.1 L250.0 176.0 L250.5 176.0 L251.0 175.1 L251.5 175.5 L252.0 175.9 L252.5 176.1 L253.0 176.3 L253.5 175.8 L254.0 175.9 L254.5 175.8 L255.0 176.1 L255.5 175.8 L256.0 176.0 L256.5 175.8 L257.0 176.0 L257.5 176.2 L258.0 176.0 L258.5 175.7 L259.0 176.1 L259.5 176.2 L260.0 176.1 L260.5 175.9 L261.0 176.2 L261.5 176.1 L262.0 176.0 L262.5 175.7 L263.0 175.9 L263.5 176.2 L264.0 176.2 L264.5 176.4 L265.0 176.3 L265.5 175.6 L266.0 176.0 L266.5 176.4 L267.0 176.1 L267.5 175.4 L268.0 176.1 L268.5 176.2 L269.0 175.9 L269.5 175.9 L270.0 176.2 L270.5 176.0 L271.0 176.0 L271.5 176.1 L272.0 175.8 L272.5 175.9 L273.0 175.8 L273.5 176.3 L274.0 176.1 L274.5 176.3 L275.0 176.1 L275.5 176.4 L276.0 175.9 L276.5 176.1 L277.0 176.1 L277.5 175.5 L278.0 176.3 L278.5 176.0 L279.0 176.3 L279.5 176.2 L280.0 176.2 L280.5 176.0 L281.0 176.0 L281.5 176.0 L282.0 176.1 L282.5 176.0 L283.0 176.4 L283.5 176.3 L284.0 175.6 L284.5 175.9 L285.0 176.1 L285.5 176.1 L286.0 176.4 L286.5 175.7 L287.0 176.0 L287.5 176.0 L288.0 175.8 L288.5 176.4 L289.0 176.3 L289.5 176.1 L290.0 175.5 L290.5 173.1 L291.0 174.2 L291.5 175.1 L292.0 175.1 L292.5 174.8 L293.0 174.9 L293.5 174.4 L294.0 174.4 L294.5 173.4 L295.0 174.4 L295.5 174.9 L296.0 175.1 L296.5 175.2 L297.0 175.3 L297.5 174.7 L298.0 175.0 L298.5 174.8 L299.0 175.1 L299.5 173.9 L300.0 174.4 L300.5 175.1 L301.0 175.1 L301.5 174.5 L302.0 175.6 L302.5 174.8 L303.0 175.7 L303.5 175.5 L304.0 174.8 L304.5 174.4 L305.0 175.4 L305.5 175.8 L306.0 175.4 L306.5 175.8 L307.0 175.8 L307.5 174.7 L308.0 175.0 L308.5 175.2 L309.0 175.1 L309.5 175.1 L310.0 176.0 L310.5 175.3 L311.0 175.1 L311.5 175.7 L312.0 175.8 L312.5 175.6 L313.0 175.3 L313.5 174.9 L314.0 175.0 L314.5 175.8 L315.0 175.6 L315.5 176.1 L316.0 175.4 L316.5 175.4 L317.0 175.6 L317.5 175.6 L318.0 174.9 L318.5 176.0 L319.0 175.4 L319.5 175.1 L320.0 175.8 L320.5 175.4 L321.0 175.8 L321.5 175.7 L322.0 175.8 L322.5 176.0 L323.0 175.0 L323.5 176.0 L324.0 176.2 L324.5 175.9 L325.0 175.9 L325.5 175.9 L326.0 175.9 L326.5 175.9 L327.0 175.8 L327.5 175.1 L328.0 175.5 L328.5 175.9 L329.0 176.1 L329.5 175.9 L330.0 175.9 L330.5 175.5 L331.0 175.3 L331.5 175.5 L332.0 175.6 L332.5 174.9 L333.0 175.2 L333.5 175.9 L334.0 175.6 L334.5 174.9 L335.0 175.9 L335.5 175.8 L336.0 175.3 L336.5 176.1 L337.0 174.8 L337.5 175.6 L338.0 175.1 L338.5 175.0 L339.0 175.8 L339.5 175.9 L340.0 174.9 L340.5 175.7 L341.0 174.8 L341.5 175.3 L342.0 176.1 L342.5 175.7 L343.0 176.0 L343.5 175.0 L344.0 175.9 L344.5 175.2 L345.0 174.6 L345.5 174.7 L346.0 175.5 L346.5 174.8 L347.0 175.3 L347.5 175.8 L348.0 175.7 L348.5 174.5 L349.0 175.7 L349.5 175.9 L350.0 175.2 L350.5 174.9 L351.0 175.6 L351.5 175.4 L352.0 174.8 L352.5 174.4 L353.0 174.3 L353.5 174.3 L354.0 175.7 L354.5 175.3 L355.0 174.9 L355.5 174.2 L356.0 174.2 L356.5 175.4 L357.0 175.3 L357.5 175.0 L358.0 174.8 L358.5 175.0 L359.0 174.8 L359.5 175.7 L360.0 174.3 L360.5 175.5 L361.0 175.5 L361.5 174.1 L362.0 175.6 L362.5 174.9 L363.0 174.1 L363.5 175.4 L364.0 174.6 L364.5 174.9 L365.0 174.7 L365.5 174.8 L366.0 175.8 L366.5 175.4 L367.0 175.4 L367.5 175.6 L368.0 175.4 L368.5 174.6 L369.0 175.1 L369.5 175.6 L370.0 174.8 L370.5 175.7 L371.0 174.8 L371.5 175.3 L372.0 174.4 L372.5 175.6 L373.0 175.4 L373.5 175.7 L374.0 175.6 L374.5 175.7 L375.0 174.0 L375.5 175.7 L376.0 175.0 L376.5 175.6 L377.0 175.1 L377.5 175.9 L378.0 175.4 L378.5 175.8 L379.0 174.9 L379.5 175.4 L380.0 175.5 L380.5 175.7 L381.0 175.7 L381.5 176.0 L382.0 174.6 L382.5 175.0 L383.0 176.0 L383.5 176.0 L384.0 175.9 L384.5 176.1 L385.0 174.9 L385.5 175.0 L386.0 175.3 L386.5 176.0 L387.0 175.5 L387.5 175.4 L388.0 176.0 L388.5 175.9 L389.0 175.5 L389.5 176.0 L390.0 175.9 L390.5 175.5 L391.0 175.5 L391.5 176.1 L392.0 175.6 L392.5 175.9 L393.0 175.0 L393.5 175.5 L394.0 175.5 L394.5 175.9 L395.0 175.8 L395.5 175.0 L396.0 175.9 L396.5 175.2 L397.0 175.9 L397.5 175.9 L398.0 175.6 L398.5 175.9 L399.0 175.3 L399.5 175.3 L400.0 175.8 L400.5 175.4 L401.0 175.5 L401.5 175.1 L402.0 176.2 L402.5 175.6 L403.0 175.2 L403.5 175.9 L404.0 175.9 L404.5 175.2 L405.0 175.5 L405.5 175.3 L406.0 176.0 L406.5 176.0 L407.0 176.1 L407.5 175.6 L408.0 176.0 L408.5 175.4 L409.0 176.0 L409.5 175.6 L410.0 175.3 L410.5 175.7 L411.0 175.7 L411.5 174.8 L412.0 176.0 L412.5 174.9 L413.0 175.8 L413.5 176.0 L414.0 175.4 L414.5 175.4 L415.0 175.6 L415.5 175.5 L416.0 175.4 L416.5 175.3 L417.0 175.2 L417.5 174.5 L418.0 176.0 L418.5 175.3 L419.0 175.6 L419.5 175.2 L420.0 175.5 L420.5 174.4 L421.0 175.9 L421.5 174.6 L422.0 175.7 L422.5 174.8 L423.0 175.8 L423.5 175.3 L424.0 175.7 L424.5 175.3 L425.0 175.8 L425.5 175.4 L426.0 174.9 L426.5 175.4 L427.0 175.3 L427.5 174.9 L428.0 175.8 L428.5 175.5 L429.0 175.3 L429.5 174.8 L430.0 175.7 L430.5 175.7 L431.0 175.0 L431.5 175.5 L432.0 175.4 L432.5 175.9 L433.0 174.2 L433.5 175.7 L434.0 175.9 L434.5 175.9 L435.0 175.9 L435.5 175.3 L436.0 174.9 L436.5 174.5 L437.0 175.1 L437.5 175.8 L438.0 174.4 L438.5 175.5 L439.0 174.4 L439.5 175.1 L440.0 174.3 L440.5 175.9 L441.0 175.1 L441.5 175.1 L442.0 175.5 L442.5 175.4 L443.0 175.0 L443.5 175.4 L444.0 175.6 L444.5 174.9 L445.0 175.9 L445.5 175.2 L446.0 175.7 L446.5 174.5 L447.0 174.6 L447.5 175.9 L448.0 175.6 L448.5 174.8 L449.0 175.8 L449.5 175.1 L450.0 175.0 L450.5 175.9 L451.0 175.7 L451.5 174.7 L452.0 175.5 L452.5 174.7 L453.0 176.0 L453.5 175.7 L454.0 175.6 L454.5 174.8 L455.0 176.1 L455.5 175.8 L456.0 175.1 L456.5 175.8 L457.0 175.9 L457.5 175.5 L458.0 175.5 L458.5 174.9 L459.0 175.5 L459.5 175.6 L460.0 176.0 L460.5 175.9 L461.0 175.9 L461.5 175.9 L462.0 175.6 L462.5 175.5 L463.0 176.0 L463.5 176.0 L464.0 175.8 L464.5 175.7 L465.0 176.1 L465.5 175.9 L466.0 176.0 L466.5 175.7 L467.0 176.1 L467.5 175.8 L468.0 175.0 L468.5 175.2 L469.0 175.6 L469.5 176.0 L470.0 175.3 L470.5 176.2 L471.0 176.0 L471.5 175.7 L472.0 176.2 L472.5 175.0 L473.0 175.9 L473.5 175.5 L474.0 175.8 L474.5 175.6 L475.0 175.4 L475.5 175.4 L476.0 175.9 L476.5 175.5 L477.0 174.9 L477.5 175.5 L478.0 175.2 L478.5 176.1 L479.0 176.1 L479.5 175.3 L480.0 175.1 L480.5 175.0 L481.0 175.3 L481.5 175.1 L482.0 174.9 L482.5 175.6 L483.0 174.9 L483.5 175.7 L484.0 175.6 L484.5 175.9 L485.0 176.0 L485.5 175.6 L486.0 175.0 L486.5 174.5 L487.0 175.6 L487.5 175.4 L488.0 175.8 L488.5 175.4 L489.0 174.4 L489.5 175.5 L490.0 175.2 L490.5 175.1 L491.0 175.4 L491.5 173.9 L492.0 175.1 L492.5 175.6 L493.0 175.3 L493.5 176.1 L494.0 176.2 L494.5 176.0 L495.0 175.7 L495.5 176.3 L496.0 175.5 L496.5 175.5 L497.0 175.7 L497.5 176.1 L498.0 176.2 L498.5 175.7 L499.0 176.2 L499.5 176.1 L500.0 175.8 L500.5 176.5 L501.0 176.4 L501.5 176.5 L502.0 176.5 L502.5 176.3 L503.0 176.4 L503.5 176.5 L504.0 176.2 L504.5 175.8 L505.0 176.1 L505.5 175.9 L506.0 175.8 L506.5 176.2 L507.0 175.7 L507.5 176.3 L508.0 176.4 L508.5 175.7 L509.0 176.4 L509.5 176.3 L510.0 176.3 L510.5 176.6 L511.0 176.2 L511.5 176.6 L512.0 176.3 L512.5 176.6 L513.0 176.2 L513.5 176.2 L514.0 176.3 L514.5 176.3 L515.0 176.2 L515.5 176.6 L516.0 176.3 L516.5 176.0 L517.0 176.1 L517.5 176.5 L518.0 176.2 L518.5 176.4 L519.0 176.5 L519.5 176.2 L520.0 176.2 L520.5 176.4 L521.0 176.4 L521.5 176.6 L522.0 176.2 L522.5 176.5 L523.0 176.1 L523.5 176.2 L524.0 176.5 L524.5 176.6 L525.0 176.4 L525.5 176.6 L526.0 176.1 L526.5 176.4 L527.0 176.5 L527.5 176.6 L528.0 176.7 L528.5 176.3 L529.0 176.4 L529.5 175.5 L530.0 176.4 L530.5 176.2 L531.0 176.3 L531.5 176.3 L532.0 176.3 L532.5 176.4 L533.0 176.5 L533.5 176.5 L534.0 176.6 L534.5 176.0 L535.0 176.3 L535.5 176.5 L536.0 176.5 L536.5 176.4 L537.0 176.3 L537.5 176.1 L538.0 176.7 L538.5 176.7 L539.0 176.7 L539.5 176.6 L540.0 176.6 L540.5 176.7 L541.0 176.6 L541.5 176.5 L542.0 176.3 L542.5 176.4 L543.0 176.3 L543.5 176.6 L544.0 176.3 L544.5 176.6 L545.0 176.6 L545.5 176.4 L546.0 176.3 L546.5 176.1 L547.0 176.7 L547.5 176.2 L548.0 176.2 L548.5 176.5 L549.0 176.3 L549.5 176.6 L550.0 176.3 L550.5 176.4 L551.0 176.4 L551.5 176.7 L552.0 176.6 L552.5 176.6 L553.0 176.7 L553.5 176.7 L554.0 176.5 L554.5 176.5 L555.0 176.7 L555.5 175.9 L556.0 176.0 L556.5 176.2 L557.0 176.2 L557.5 176.1 L558.0 176.5 L558.5 176.1 L559.0 176.6 L559.5 176.2 L560.0 176.4 L560.5 176.4 L561.0 176.5 L561.5 176.6 L562.0 176.4 L562.5 176.7 L563.0 176.6 L563.5 176.6 L564.0 176.7 L564.5 176.5 L565.0 176.5 L565.5 176.8 L566.0 176.7 L566.5 176.7 L567.0 176.4 L567.5 176.6 L568.0 176.2 L568.5 176.4 L569.0 176.5 L569.5 176.5 L570.0 176.2 L570.5 176.6 L571.0 176.5 L571.5 176.5 L572.0 176.3 L572.5 176.3 L573.0 176.4 L573.5 176.5 L574.0 176.3 L574.5 176.4 L575.0 176.7 L575.5 176.8 L576.0 176.7 L576.5 176.7 L577.0 176.6 L577.5 176.6 L578.0 176.6 L578.5 176.5 L579.0 176.5 L579.5 176.8 L580.0 176.7 L580.5 176.3 L581.0 176.5 L581.5 176.6 L582.0 176.6 L582.5 176.5 L583.0 176.6 L583.5 176.5 L584.0 176.8 L584.5 176.7 L585.0 176.5 L585.5 176.7 L586.0 176.4 L586.5 176.7 L587.0 176.5 L587.5 176.7 L588.0 176.7 L588.5 176.6 L589.0 176.5 L589.5 176.8 L590.0 176.6 L590.5 176.8 L591.0 176.8 L591.5 176.6 L592.0 176.6 L592.5 176.6 L593.0 176.7 L593.5 176.6 L594.0 176.2 L594.5 176.6 L595.0 176.7 L595.5 176.7 L596.0 176.7 L596.5 176.6 L597.0 176.5 L597.5 176.6 L598.0 176.7 L598.5 176.7 L599.0 176.7 L599.5 176.5 L600.0 176.6 L600.0 177.5 L599.5 177.6 L599.0 177.6 L598.5 177.4 L598.0 177.5 L597.5 177.5 L597.0 177.6 L596.5 177.7 L596.0 177.5 L595.5 177.7 L595.0 177.5 L594.5 177.9 L594.0 177.5 L593.5 178.0 L593.0 177.3 L592.5 177.5 L592.0 177.5 L591.5 177.4 L591.0 177.6 L590.5 177.5 L590.0 177.7 L589.5 177.7 L589.0 177.4 L588.5 177.7 L588.0 177.5 L587.5 177.6 L587.0 177.5 L586.5 177.7 L586.0 177.6 L585.5 177.7 L585.0 177.5 L584.5 177.9 L584.0 177.9 L583.5 177.7 L583.0 177.5 L582.5 177.8 L582.0 177.6 L581.5 177.6 L581.0 178.0 L580.5 177.6 L580.0 177.4 L579.5 177.5 L579.0 177.4 L578.5 177.5 L578.0 177.8 L577.5 177.6 L577.0 177.6 L576.5 177.7 L576.0 177.8 L575.5 177.4 L575.0 177.5 L574.5 177.5 L574.0 177.9 L573.5 177.6 L573.0 177.6 L572.5 177.4 L572.0 177.9 L571.5 177.5 L571.0 177.9 L570.5 177.7 L570.0 177.6 L569.5 177.6 L569.0 177.7 L568.5 177.7 L568.0 177.8 L567.5 178.1 L567.0 177.4 L566.5 177.5 L566.0 177.7 L565.5 177.6 L565.0 177.5 L564.5 177.9 L564.0 177.9 L563.5 177.6 L563.0 177.6 L562.5 177.5 L562.0 177.6 L561.5 177.8 L561.0 177.6 L560.5 177.7 L560.0 177.8 L559.5 177.9 L559.0 177.6 L558.5 177.9 L558.0 177.6 L557.5 177.6 L557.0 177.8 L556.5 177.7 L556.0 177.8 L555.5 177.8 L555.0 177.5 L554.5 177.6 L554.0 177.9 L553.5 177.5 L553.0 177.7 L552.5 177.5 L552.0 177.5 L551.5 177.9 L551.0 177.9 L550.5 177.5 L550.0 177.6 L549.5 177.5 L549.0 177.8 L548.5 177.9 L548.0 177.8 L547.5 177.8 L547.0 177.6 L546.5 177.7 L546.0 177.8 L545.5 177.9 L545.0 177.7 L544.5 177.7 L544.0 178.0 L543.5 178.1 L543.0 177.9 L542.5 177.9 L542.0 177.5 L541.5 178.0 L541.0 177.6 L540.5 177.6 L540.0 178.0 L539.5 177.7 L539.0 177.6 L538.5 177.5 L538.0 177.7 L537.5 177.6 L537.0 177.7 L536.5 177.7 L536.0 177.7 L535.5 177.6 L535.0 177.8 L534.5 177.6 L534.0 178.0 L533.5 177.8 L533.0 177.8 L532.5 178.2 L532.0 177.9 L531.5 177.8 L531.0 177.7 L530.5 177.8 L530.0 178.0 L529.5 178.0 L529.0 177.9 L528.5 177.7 L528.0 177.7 L527.5 178.1 L527.0 177.8 L526.5 177.7 L526.0 177.8 L525.5 177.8 L525.0 177.7 L524.5 177.7 L524.0 178.2 L523.5 177.7 L523.0 178.0 L522.5 177.8 L522.0 177.9 L521.5 177.8 L521.0 178.3 L520.5 177.9 L520.0 178.0 L519.5 177.8 L519.0 178.0 L518.5 178.5 L518.0 177.9 L517.5 178.0 L517.0 177.8 L516.5 177.8 L516.0 177.8 L515.5 177.8 L515.0 177.7 L514.5 178.2 L514.0 177.6 L513.5 177.7 L513.0 177.6 L512.5 177.8 L512.0 177.7 L511.5 177.9 L511.0 177.6 L510.5 177.7 L510.0 177.9 L509.5 177.7 L509.0 177.8 L508.5 177.9 L508.0 178.0 L507.5 177.9 L507.0 178.6 L506.5 177.8 L506.0 178.3 L505.5 177.9 L505.0 177.8 L504.5 178.1 L504.0 177.7 L503.5 177.7 L503.0 177.9 L502.5 177.7 L502.0 177.8 L501.5 178.1 L501.0 177.8 L500.5 177.9 L500.0 178.3 L499.5 177.7 L499.0 177.7 L498.5 178.0 L498.0 177.8 L497.5 178.0 L497.0 178.0 L496.5 178.1 L496.0 178.2 L495.5 178.6 L495.0 178.4 L494.5 177.9 L494.0 178.0 L493.5 178.5 L493.0 178.3 L492.5 179.0 L492.0 178.4 L491.5 179.4 L491.0 178.8 L490.5 179.9 L490.0 178.3 L489.5 178.7 L489.0 178.4 L488.5 179.1 L488.0 178.4 L487.5 178.2 L487.0 179.1 L486.5 179.1 L486.0 179.7 L485.5 178.9 L485.0 178.9 L484.5 178.5 L484.0 179.2 L483.5 178.9 L483.0 178.5 L482.5 179.0 L482.0 178.6 L481.5 178.2 L481.0 178.4 L480.5 178.8 L480.0 178.6 L479.5 178.3 L479.0 179.3 L478.5 179.2 L478.0 179.4 L477.5 178.5 L477.0 178.6 L476.5 178.5 L476.0 178.6 L475.5 178.7 L475.0 178.4 L474.5 178.8 L474.0 178.2 L473.5 178.2 L473.0 178.9 L472.5 178.1 L472.0 178.5 L471.5 179.1 L471.0 178.5 L470.5 178.1 L470.0 178.3 L469.5 178.1 L469.0 178.3 L468.5 178.8 L468.0 178.9 L467.5 178.9 L467.0 178.1 L466.5 178.6 L466.0 178.0 L465.5 178.6 L465.0 178.0 L464.5 178.8 L464.0 178.7 L463.5 178.3 L463.0 178.2 L462.5 178.6 L462.0 178.2 L461.5 178.5 L461.0 178.3 L460.5 179.1 L460.0 178.1 L459.5 178.0 L459.0 178.4 L458.5 178.6 L458.0 178.5 L457.5 178.5 L457.0 178.8 L456.5 178.4 L456.0 179.1 L455.5 178.3 L455.0 178.1 L454.5 178.6 L454.0 178.5 L453.5 178.6 L453.0 178.6 L452.5 179.4 L452.0 178.2 L451.5 179.4 L451.0 178.7 L450.5 179.2 L450.0 179.3 L449.5 178.4 L449.0 178.8 L448.5 178.3 L448.0 179.1 L447.5 178.5 L447.0 179.0 L446.5 178.7 L446.0 179.0 L445.5 179.7 L445.0 179.4 L444.5 178.8 L444.0 178.6 L443.5 179.0 L443.0 179.2 L442.5 179.2 L442.0 178.3 L441.5 178.9 L441.0 178.5 L440.5 179.1 L440.0 179.3 L439.5 179.0 L439.0 179.0 L438.5 178.6 L438.0 179.7 L437.5 180.0 L437.0 179.0 L436.5 179.5 L436.0 179.3 L435.5 179.2 L435.0 178.9 L434.5 178.6 L434.0 179.3 L433.5 179.1 L433.0 178.8 L432.5 178.8 L432.0 178.8 L431.5 179.7 L431.0 178.9 L430.5 179.2 L430.0 178.6 L429.5 179.7 L429.0 180.0 L428.5 178.6 L428.0 178.9 L427.5 179.5 L427.0 178.4 L426.5 179.1 L426.0 178.7 L425.5 178.7 L425.0 178.9 L424.5 178.5 L424.0 179.0 L423.5 178.3 L423.0 178.4 L422.5 178.3 L422.0 178.5 L421.5 178.8 L421.0 178.3 L420.5 179.4 L420.0 178.3 L419.5 178.8 L419.0 178.7 L418.5 178.3 L418.0 179.6 L417.5 178.2 L417.0 178.7 L416.5 178.2 L416.0 178.4 L415.5 178.5 L415.0 179.1 L414.5 178.8 L414.0 178.9 L413.5 178.3 L413.0 179.0 L412.5 178.1 L412.0 179.5 L411.5 179.5 L411.0 178.4 L410.5 178.5 L410.0 178.7 L409.5 179.4 L409.0 178.3 L408.5 178.2 L408.0 178.8 L407.5 178.3 L407.0 178.8 L406.5 178.4 L406.0 179.3 L405.5 178.2 L405.0 178.8 L404.5 178.1 L404.0 178.2 L403.5 178.3 L403.0 178.6 L402.5 178.0 L402.0 178.5 L401.5 178.0 L401.0 178.9 L400.5 178.3 L400.0 178.4 L399.5 178.4 L399.0 178.3 L398.5 178.3 L398.0 178.2 L397.5 178.8 L397.0 178.3 L396.5 178.4 L396.0 178.7 L395.5 178.2 L395.0 178.5 L394.5 178.7 L394.0 178.0 L393.5 178.3 L393.0 178.3 L392.5 179.1 L392.0 178.3 L391.5 178.6 L391.0 178.2 L390.5 178.7 L390.0 178.0 L389.5 178.0 L389.0 178.3 L388.5 178.6 L388.0 178.4 L387.5 178.7 L387.0 178.1 L386.5 178.6 L386.0 178.3 L385.5 178.8 L385.0 178.2 L384.5 179.0 L384.0 178.1 L383.5 178.2 L383.0 178.7 L382.5 179.6 L382.0 178.8 L381.5 178.7 L381.0 178.4 L380.5 178.5 L380.0 178.3 L379.5 178.8 L379.0 178.9 L378.5 178.4 L378.0 179.6 L377.5 178.5 L377.0 178.6 L376.5 178.7 L376.0 180.1 L375.5 178.7 L375.0 180.2 L374.5 179.2 L374.0 179.6 L373.5 179.2 L373.0 180.2 L372.5 179.0 L372.0 180.6 L371.5 178.9 L371.0 178.7 L370.5 180.0 L370.0 179.5 L369.5 178.4 L369.0 179.3 L368.5 180.0 L368.0 179.3 L367.5 178.7 L367.0 180.0 L366.5 179.0 L366.0 178.4 L365.5 178.7 L365.0 179.7 L364.5 178.9 L364.0 178.8 L363.5 179.1 L363.0 178.5 L362.5 179.1 L362.0 179.5 L361.5 180.1 L361.0 179.9 L360.5 180.1 L360.0 179.3 L359.5 178.8 L359.0 178.9 L358.5 178.9 L358.0 178.8 L357.5 178.9 L357.0 179.0 L356.5 180.0 L356.0 180.0 L355.5 178.4 L355.0 178.6 L354.5 178.7 L354.0 178.7 L353.5 178.7 L353.0 179.0 L352.5 178.4 L352.0 179.6 L351.5 178.3 L351.0 179.2 L350.5 178.5 L350.0 178.7 L349.5 178.4 L349.0 178.4 L348.5 178.7 L348.0 179.7 L347.5 178.3 L347.0 178.9 L346.5 179.1 L346.0 178.5 L345.5 178.4 L345.0 178.2 L344.5 179.6 L344.0 179.2 L343.5 178.2 L343.0 178.9 L342.5 178.5 L342.0 178.2 L341.5 179.0 L341.0 179.2 L340.5 179.4 L340.0 179.2 L339.5 178.9 L339.0 178.5 L338.5 179.0 L338.0 178.4 L337.5 179.3 L337.0 178.6 L336.5 178.6 L336.0 178.6 L335.5 179.4 L335.0 178.9 L334.5 178.8 L334.0 178.9 L333.5 179.3 L333.0 179.3 L332.5 179.6 L332.0 178.6 L331.5 178.4 L331.0 178.9 L330.5 179.2 L330.0 179.1 L329.5 178.6 L329.0 178.1 L328.5 178.2 L328.0 178.3 L327.5 178.5 L327.0 178.1 L326.5 179.1 L326.0 178.3 L325.5 178.0 L325.0 178.4 L324.5 178.4 L324.0 178.6 L323.5 178.9 L323.0 178.5 L322.5 178.3 L322.0 179.2 L321.5 178.4 L321.0 178.2 L320.5 178.3 L320.0 178.8 L319.5 178.1 L319.0 178.5 L318.5 178.6 L318.0 178.2 L317.5 178.1 L317.0 178.7 L316.5 178.7 L316.0 178.8 L315.5 179.4 L315.0 178.8 L314.5 179.2 L314.0 178.6 L313.5 178.7 L313.0 178.6 L312.5 178.2 L312.0 179.6 L311.5 178.6 L311.0 178.8 L310.5 179.7 L310.0 178.2 L309.5 178.7 L309.0 179.2 L308.5 178.3 L308.0 179.8 L307.5 179.8 L307.0 178.9 L306.5 179.5 L306.0 178.5 L305.5 178.4 L305.0 179.0 L304.5 179.1 L304.0 178.6 L303.5 179.2 L303.0 179.8 L302.5 178.5 L302.0 179.4 L301.5 178.6 L301.0 178.9 L300.5 179.8 L300.0 179.7 L299.5 178.7 L299.0 180.3 L298.5 178.5 L298.0 179.8 L297.5 180.5 L297.0 178.6 L296.5 180.0 L296.0 179.7 L295.5 179.3 L295.0 179.1 L294.5 178.7 L294.0 180.2 L293.5 181.1 L293.0 181.2 L292.5 179.5 L292.0 180.7 L291.5 181.6 L291.0 181.7 L290.5 180.4 L290.0 180.0 L289.5 177.7 L289.0 177.8 L288.5 177.7 L288.0 177.8 L287.5 177.9 L287.0 178.0 L286.5 178.2 L286.0 178.3 L285.5 178.0 L285.0 178.1 L284.5 178.0 L284.0 177.8 L283.5 178.3 L283.0 178.4 L282.5 178.1 L282.0 178.1 L281.5 178.5 L281.0 178.6 L280.5 178.5 L280.0 178.0 L279.5 177.9 L279.0 178.0 L278.5 177.8 L278.0 178.5 L277.5 178.0 L277.0 178.3 L276.5 178.0 L276.0 177.8 L275.5 178.4 L275.0 177.9 L274.5 178.3 L274.0 177.8 L273.5 177.8 L273.0 178.2 L272.5 177.9 L272.0 177.9 L271.5 178.4 L271.0 178.2 L270.5 178.4 L270.0 178.5 L269.5 178.0 L269.0 177.8 L268.5 178.2 L268.0 178.1 L267.5 178.6 L267.0 177.9 L266.5 178.0 L266.0 178.1 L265.5 178.2 L265.0 178.0 L264.5 178.8 L264.0 178.1 L263.5 177.9 L263.0 178.5 L262.5 178.9 L262.0 178.1 L261.5 178.6 L261.0 177.9 L260.5 178.3 L260.0 178.6 L259.5 178.2 L259.0 178.6 L258.5 178.3 L258.0 178.2 L257.5 178.1 L257.0 178.5 L256.5 179.0 L256.0 178.7 L255.5 178.1 L255.0 178.6 L254.5 179.0 L254.0 178.6 L253.5 178.4 L253.0 178.3 L252.5 178.8 L252.0 178.4 L251.5 178.1 L251.0 178.8 L250.5 178.7 L250.0 178.1 L249.5 178.9 L249.0 178.3 L248.5 178.3 L248.0 178.7 L247.5 178.7 L247.0 178.0 L246.5 178.0 L246.0 178.5 L245.5 178.1 L245.0 178.0 L244.5 178.0 L244.0 178.6 L243.5 178.7 L243.0 178.9 L242.5 178.2 L242.0 178.2 L241.5 178.7 L241.0 178.6 L240.5 178.2 L240.0 178.9 L239.5 178.1 L239.0 178.5 L238.5 178.3 L238.0 178.2 L237.5 178.1 L237.0 179.3 L236.5 178.3 L236.0 179.3 L235.5 178.3 L235.0 178.7 L234.5 178.2 L234.0 178.1 L233.5 178.1 L233.0 178.2 L232.5 178.2 L232.0 178.9 L231.5 178.9 L231.0 178.8 L230.5 178.2 L230.0 178.1 L229.5 178.4 L229.0 179.4 L228.5 178.1 L228.0 178.7 L227.5 178.2 L227.0 178.2 L226.5 179.0 L226.0 178.4 L225.5 178.7 L225.0 179.2 L224.5 178.8 L224.0 179.2 L223.5 178.5 L223.0 178.2 L222.5 179.1 L222.0 178.9 L221.5 178.2 L221.0 178.9 L220.5 178.9 L220.0 179.8 L219.5 178.4 L219.0 178.8 L218.5 178.5 L218.0 179.3 L217.5 178.9 L217.0 178.5 L216.5 179.2 L216.0 179.3 L215.5 178.6 L215.0 179.1 L214.5 178.3 L214.0 179.3 L213.5 179.6 L213.0 178.3 L212.5 179.8 L212.0 178.8 L211.5 179.3 L211.0 178.8 L210.5 179.3 L210.0 179.9 L209.5 179.4 L209.0 178.4 L208.5 179.9 L208.0 179.3 L207.5 178.5 L207.0 179.1 L206.5 178.7 L206.0 178.5 L205.5 178.4 L205.0 179.1 L204.5 178.6 L204.0 179.4 L203.5 178.8 L203.0 178.5 L202.5 178.9 L202.0 178.8 L201.5 179.2 L201.0 179.8 L200.5 179.7 L200.0 179.2 L199.5 179.1 L199.0 180.1 L198.5 179.5 L198.0 178.6 L197.5 179.5 L197.0 179.1 L196.5 180.1 L196.0 178.4 L195.5 179.8 L195.0 179.3 L194.5 179.1 L194.0 178.9 L193.5 179.5 L193.0 178.5 L192.5 179.2 L192.0 179.1 L191.5 178.9 L191.0 179.8 L190.5 178.6 L190.0 179.4 L189.5 178.7 L189.0 180.4 L188.5 179.3 L188.0 179.9 L187.5 179.6 L187.0 180.5 L186.5 180.0 L186.0 179.5 L185.5 178.8 L185.0 179.1 L184.5 178.7 L184.0 178.8 L183.5 179.8 L183.0 178.9 L182.5 179.1 L182.0 181.2 L181.5 180.2 L181.0 179.1 L180.5 181.1 L180.0 181.6 L179.5 181.8 L179.0 181.7 L178.5 181.8 L178.0 180.5 L177.5 182.7 L177.0 181.1 L176.5 178.1 L176.0 178.6 L175.5 178.4 L175.0 178.7 L174.5 178.5 L174.0 179.4 L173.5 178.7 L173.0 179.3 L172.5 179.0 L172.0 178.1 L171.5 178.4 L171.0 178.2 L170.5 178.1 L170.0 179.4 L169.5 178.6 L169.0 178.3 L168.5 178.9 L168.0 178.1 L167.5 178.5 L167.0 178.9 L166.5 178.8 L166.0 178.7 L165.5 179.4 L165.0 178.1 L164.5 178.9 L164.0 178.7 L163.5 178.3 L163.0 178.8 L162.5 178.5 L162.0 178.1 L161.5 178.5 L161.0 178.8 L160.5 179.2 L160.0 178.3 L159.5 179.3 L159.0 178.2 L158.5 178.9 L158.0 178.3 L157.5 178.1 L157.0 178.5 L156.5 178.7 L156.0 179.2 L155.5 179.0 L155.0 179.0 L154.5 178.1 L154.0 178.4 L153.5 178.7 L153.0 178.2 L152.5 178.4 L152.0 178.6 L151.5 178.6 L151.0 178.5 L150.5 178.4 L150.0 179.5 L149.5 179.6 L149.0 178.7 L148.5 179.5 L148.0 179.2 L147.5 179.3 L147.0 179.7 L146.5 179.3 L146.0 178.3 L145.5 178.4 L145.0 179.0 L144.5 178.8 L144.0 178.9 L143.5 179.6 L143.0 179.3 L142.5 178.5 L142.0 178.3 L141.5 178.5 L141.0 178.2 L140.5 178.2 L140.0 179.0 L139.5 178.3 L139.0 179.7 L138.5 178.7 L138.0 179.2 L137.5 179.4 L137.0 178.8 L136.5 179.1 L136.0 178.8 L135.5 179.2 L135.0 178.3 L134.5 179.1 L134.0 179.0 L133.5 179.2 L133.0 178.9 L132.5 178.3 L132.0 179.1 L131.5 178.8 L131.0 180.1 L130.5 179.2 L130.0 178.5 L129.5 179.4 L129.0 179.6 L128.5 178.5 L128.0 179.0 L127.5 178.6 L127.0 179.5 L126.5 179.0 L126.0 178.5 L125.5 178.2 L125.0 178.2 L124.5 178.5 L124.0 179.0 L123.5 179.8 L123.0 178.9 L122.5 179.2 L122.0 179.2 L121.5 178.7 L121.0 179.4 L120.5 178.4 L120.0 178.4 L119.5 179.8 L119.0 179.6 L118.5 179.4 L118.0 179.4 L117.5 178.8 L117.0 179.2 L116.5 178.4 L116.0 178.3 L115.5 179.8 L115.0 178.8 L114.5 178.9 L114.0 178.4 L113.5 179.8 L113.0 179.1 L112.5 179.3 L112.0 178.5 L111.5 179.1 L111.0 179.7 L110.5 180.2 L110.0 178.6 L109.5 180.3 L109.0 179.8 L108.5 179.2 L108.0 180.0 L107.5 179.6 L107.0 180.2 L106.5 179.0 L106.0 180.1 L105.5 179.5 L105.0 179.1 L104.5 180.9 L104.0 179.7 L103.5 179.5 L103.0 180.2 L102.5 179.0 L102.0 179.9 L101.5 178.6 L101.0 178.6 L100.5 179.9 L100.0 179.8 L99.5 179.2 L99.0 178.6 L98.5 179.8 L98.0 180.2 L97.5 179.6 L97.0 178.9 L96.5 178.8 L96.0 179.7 L95.5 179.8 L95.0 179.5 L94.5 179.4 L94.0 179.1 L93.5 180.1 L93.0 179.3 L92.5 179.9 L92.0 180.6 L91.5 179.9 L91.0 180.1 L90.5 180.2 L90.0 182.5 L89.5 180.3 L89.0 178.9 L88.5 179.3 L88.0 179.6 L87.5 179.6 L87.0 178.3 L86.5 178.4 L86.0 178.5 L85.5 178.8 L85.0 178.8 L84.5 179.7 L84.0 178.3 L83.5 178.5 L83.0 179.0 L82.5 178.2 L82.0 179.6 L81.5 178.7 L81.0 178.3 L80.5 178.5 L80.0 178.4 L79.5 178.7 L79.0 179.1 L78.5 178.7 L78.0 179.7 L77.5 179.0 L77.0 178.6 L76.5 179.3 L76.0 178.4 L75.5 178.6 L75.0 178.9 L74.5 179.5 L74.0 179.6 L73.5 178.5 L73.0 179.7 L72.5 178.5 L72.0 179.9 L71.5 178.8 L71.0 179.2 L70.5 178.7 L70.0 178.7 L69.5 179.7 L69.0 180.2 L68.5 179.4 L68.0 181.4 L67.5 180.9 L67.0 181.6 L66.5 179.8 L66.0 179.4 L65.5 179.8 L65.0 182.2 L64.5 178.6 L64.0 178.4 L63.5 179.8 L63.0 178.7 L62.5 179.0 L62.0 178.6 L61.5 178.6 L61.0 179.2 L60.5 179.5 L60.0 180.1 L59.5 179.3 L59.0 178.6 L58.5 179.5 L58.0 179.1 L57.5 179.7 L57.0 179.4 L56.5 179.6 L56.0 180.4 L55.5 179.2 L55.0 179.3 L54.5 181.2 L54.0 179.4 L53.5 180.7 L53.0 179.9 L52.5 182.3 L52.0 178.8 L51.5 178.4 L51.0 179.0 L50.5 178.4 L50.0 179.9 L49.5 179.4 L49.0 179.2 L48.5 178.6 L48.0 179.8 L47.5 179.0 L47.0 179.6 L46.5 180.4 L46.0 178.8 L45.5 180.6 L45.0 178.8 L44.5 178.8 L44.0 180.0 L43.5 181.1 L43.0 181.3 L42.5 179.5 L42.0 179.5 L41.5 181.1 L41.0 180.6 L40.5 181.9 L40.0 181.7 L39.5 179.8 L39.0 179.2 L38.5 179.4 L38.0 179.4 L37.5 178.3 L37.0 179.3 L36.5 178.3 L36.0 179.6 L35.5 178.6 L35.0 178.5 L34.5 179.4 L34.0 179.5 L33.5 179.2 L33.0 179.6 L32.5 178.9 L32.0 179.6 L31.5 179.5 L31.0 178.7 L30.5 179.2 L30.0 181.2 L29.5 181.3 L29.0 181.0 L28.5 180.9 L28.0 179.4 L27.5 180.5 L27.0 178.5 L26.5 178.9 L26.0 178.3 L25.5 178.5 L25.0 178.9 L24.5 178.7 L24.0 179.4 L23.5 179.4 L23.0 180.1 L22.5 178.4 L22.0 179.7 L21.5 179.0 L21.0 178.7 L20.5 179.1 L20.0 180.0 L19.5 178.7 L19.0 179.1 L18.5 178.9 L18.0 179.4 L17.5 178.9 L17.0 179.2 L16.5 179.2 L16.0 180.4 L15.5 181.8 L15.0 181.5 L14.5 181.5 L14.0 178.4 L13.5 178.3 L13.0 179.4 L12.5 179.3 L12.0 179.4 L11.5 178.6 L11.0 179.7 L10.5 178.9 L10.0 178.4 L9.5 178.8 L9.0 179.4 L8.5 178.6 L8.0 179.5 L7.5 179.2 L7.0 179.0 L6.5 178.7 L6.0 179.7 L5.5 179.1 L5.0 178.9 L4.5 178.9 L4.0 181.2 L3.5 179.6 L3.0 179.1 L2.5 180.5 L2.0 179.4 L1.5 179.3 L1.0 178.2 L0.5 178.8 L0.0 179.3 Z" fill="#18141c" opacity="0.95"/><path d="M0.0 185.9 L0.5 187.0 L1.0 186.7 L1.5 187.0 L2.0 184.6 L2.5 185.6 L3.0 185.2 L3.5 185.8 L4.0 185.1 L4.5 185.8 L5.0 186.5 L5.5 185.9 L6.0 185.2 L6.5 185.6 L7.0 187.0 L7.5 186.8 L8.0 185.2 L8.5 186.8 L9.0 185.8 L9.5 187.0 L10.0 187.0 L10.5 185.6 L11.0 186.7 L11.5 187.2 L12.0 186.2 L12.5 185.6 L13.0 185.7 L13.5 186.2 L14.0 186.5 L14.5 182.3 L15.0 185.7 L15.5 185.9 L16.0 186.0 L16.5 185.4 L17.0 185.5 L17.5 184.5 L18.0 185.1 L18.5 185.8 L19.0 186.5 L19.5 184.7 L20.0 186.6 L20.5 186.2 L21.0 186.4 L21.5 187.0 L22.0 186.6 L22.5 186.8 L23.0 186.2 L23.5 186.7 L24.0 186.7 L24.5 185.9 L25.0 186.4 L25.5 186.6 L26.0 185.6 L26.5 185.9 L27.0 186.6 L27.5 185.8 L28.0 185.3 L28.5 186.1 L29.0 185.7 L29.5 185.4 L30.0 185.1 L30.5 185.9 L31.0 185.5 L31.5 186.7 L32.0 185.4 L32.5 185.9 L33.0 186.3 L33.5 186.6 L34.0 186.2 L34.5 186.7 L35.0 186.3 L35.5 186.6 L36.0 186.5 L36.5 186.4 L37.0 186.1 L37.5 187.0 L38.0 186.7 L38.5 186.2 L39.0 185.7 L39.5 185.7 L40.0 185.7 L40.5 186.1 L41.0 184.1 L41.5 186.1 L42.0 184.9 L42.5 186.2 L43.0 186.1 L43.5 186.6 L44.0 186.2 L44.5 186.7 L45.0 185.6 L45.5 186.4 L46.0 186.4 L46.5 185.4 L47.0 185.9 L47.5 186.8 L48.0 186.1 L48.5 187.0 L49.0 186.9 L49.5 185.5 L50.0 186.6 L50.5 186.4 L51.0 185.9 L51.5 186.6 L52.0 186.6 L52.5 184.2 L53.0 184.7 L53.5 185.8 L54.0 185.4 L54.5 184.3 L55.0 184.7 L55.5 186.1 L56.0 185.7 L56.5 186.8 L57.0 186.5 L57.5 185.1 L58.0 185.3 L58.5 186.9 L59.0 186.1 L59.5 186.9 L60.0 186.5 L60.5 186.9 L61.0 186.1 L61.5 185.6 L62.0 185.6 L62.5 187.0 L63.0 186.6 L63.5 186.1 L64.0 186.3 L64.5 187.1 L65.0 182.4 L65.5 184.9 L66.0 185.5 L66.5 183.4 L67.0 185.9 L67.5 186.2 L68.0 185.6 L68.5 185.2 L69.0 185.6 L69.5 184.9 L70.0 185.7 L70.5 186.7 L71.0 186.0 L71.5 186.7 L72.0 185.3 L72.5 186.6 L73.0 186.9 L73.5 185.5 L74.0 186.7 L74.5 186.2 L75.0 186.7 L75.5 186.9 L76.0 186.5 L76.5 187.2 L77.0 187.1 L77.5 187.1 L78.0 186.2 L78.5 186.1 L79.0 186.3 L79.5 186.9 L80.0 186.4 L80.5 185.8 L81.0 187.2 L81.5 185.9 L82.0 186.1 L82.5 187.3 L83.0 187.3 L83.5 186.8 L84.0 186.6 L84.5 186.8 L85.0 186.5 L85.5 186.8 L86.0 187.3 L86.5 185.9 L87.0 186.6 L87.5 186.1 L88.0 187.0 L88.5 187.2 L89.0 185.8 L89.5 184.1 L90.0 185.4 L90.5 184.5 L91.0 185.5 L91.5 185.4 L92.0 185.0 L92.5 184.5 L93.0 185.1 L93.5 185.2 L94.0 184.1 L94.5 186.0 L95.0 185.2 L95.5 186.3 L96.0 186.4 L96.5 185.6 L97.0 186.2 L97.5 186.6 L98.0 186.2 L98.5 185.0 L99.0 186.5 L99.5 186.7 L100.0 186.3 L100.5 186.6 L101.0 185.6 L101.5 186.4 L102.0 186.9 L102.5 186.5 L103.0 186.3 L103.5 185.4 L104.0 185.8 L104.5 185.7 L105.0 186.0 L105.5 186.1 L106.0 186.1 L106.5 186.7 L107.0 186.4 L107.5 185.3 L108.0 185.8 L108.5 185.9 L109.0 186.1 L109.5 187.0 L110.0 185.5 L110.5 187.0 L111.0 186.7 L111.5 186.7 L112.0 186.7 L112.5 186.3 L113.0 185.4 L113.5 186.2 L114.0 187.0 L114.5 186.7 L115.0 185.5 L115.5 187.1 L116.0 186.6 L116.5 186.8 L117.0 186.9 L117.5 186.8 L118.0 186.9 L118.5 186.9 L119.0 187.2 L119.5 187.2 L120.0 187.2 L120.5 186.6 L121.0 186.2 L121.5 186.8 L122.0 186.7 L122.5 187.2 L123.0 185.7 L123.5 186.5 L124.0 186.6 L124.5 186.4 L125.0 186.1 L125.5 186.6 L126.0 186.4 L126.5 185.7 L127.0 185.7 L127.5 185.9 L128.0 186.7 L128.5 185.1 L129.0 185.4 L129.5 186.2 L130.0 186.4 L130.5 187.1 L131.0 186.5 L131.5 186.9 L132.0 187.0 L132.5 185.9 L133.0 185.6 L133.5 187.2 L134.0 186.8 L134.5 187.0 L135.0 186.7 L135.5 186.8 L136.0 186.6 L136.5 186.7 L137.0 187.0 L137.5 186.9 L138.0 186.8 L138.5 186.5 L139.0 186.2 L139.5 187.1 L140.0 186.9 L140.5 186.2 L141.0 187.0 L141.5 186.9 L142.0 186.6 L142.5 185.7 L143.0 186.7 L143.5 186.4 L144.0 186.9 L144.5 187.0 L145.0 186.8 L145.5 186.1 L146.0 187.1 L146.5 186.2 L147.0 186.3 L147.5 187.0 L148.0 186.0 L148.5 186.6 L149.0 187.1 L149.5 187.2 L150.0 186.8 L150.5 186.7 L151.0 186.0 L151.5 186.8 L152.0 187.1 L152.5 187.2 L153.0 186.6 L153.5 186.8 L154.0 187.3 L154.5 187.2 L155.0 187.3 L155.5 187.0 L156.0 187.0 L156.5 186.7 L157.0 187.0 L157.5 187.3 L158.0 187.3 L158.5 186.8 L159.0 186.9 L159.5 187.1 L160.0 187.2 L160.5 186.9 L161.0 187.0 L161.5 187.1 L162.0 186.7 L162.5 186.6 L163.0 187.3 L163.5 187.1 L164.0 186.1 L164.5 187.2 L165.0 187.2 L165.5 187.3 L166.0 186.7 L166.5 187.4 L167.0 187.1 L167.5 186.9 L168.0 187.3 L168.5 186.1 L169.0 186.9 L169.5 186.9 L170.0 187.1 L170.5 186.1 L171.0 187.1 L171.5 186.8 L172.0 187.2 L172.5 187.4 L173.0 186.5 L173.5 186.8 L174.0 186.9 L174.5 186.7 L175.0 186.8 L175.5 187.3 L176.0 186.1 L176.5 186.1 L177.0 185.7 L177.5 185.6 L178.0 185.4 L178.5 184.3 L179.0 185.9 L179.5 185.7 L180.0 186.4 L180.5 185.8 L181.0 185.9 L181.5 184.9 L182.0 184.8 L182.5 185.5 L183.0 185.2 L183.5 186.2 L184.0 186.2 L184.5 184.7 L185.0 186.3 L185.5 185.6 L186.0 185.4 L186.5 185.2 L187.0 185.7 L187.5 186.0 L188.0 186.8 L188.5 185.9 L189.0 185.5 L189.5 185.4 L190.0 186.8 L190.5 185.7 L191.0 186.1 L191.5 186.9 L192.0 185.8 L192.5 185.3 L193.0 186.7 L193.5 186.9 L194.0 187.1 L194.5 186.3 L195.0 186.7 L195.5 186.8 L196.0 187.1 L196.5 186.1 L197.0 186.4 L197.5 187.0 L198.0 186.0 L198.5 185.4 L199.0 186.5 L199.5 186.3 L200.0 185.9 L200.5 186.2 L201.0 185.4 L201.5 186.8 L202.0 186.5 L202.5 186.6 L203.0 185.7 L203.5 185.9 L204.0 186.6 L204.5 186.2 L205.0 186.6 L205.5 186.9 L206.0 185.6 L206.5 187.0 L207.0 186.6 L207.5 186.1 L208.0 186.0 L208.5 187.2 L209.0 186.1 L209.5 185.9 L210.0 186.2 L210.5 185.6 L211.0 187.2 L211.5 185.6 L212.0 187.2 L212.5 186.8 L213.0 186.2 L213.5 185.6 L214.0 186.4 L214.5 186.2 L215.0 187.1 L215.5 186.8 L216.0 186.2 L216.5 186.5 L217.0 185.4 L217.5 186.8 L218.0 186.2 L218.5 186.1 L219.0 186.8 L219.5 186.6 L220.0 187.1 L220.5 186.9 L221.0 186.6 L221.5 186.3 L222.0 186.7 L222.5 187.2 L223.0 186.7 L223.5 186.6 L224.0 187.2 L224.5 186.5 L225.0 187.3 L225.5 187.0 L226.0 186.0 L226.5 186.6 L227.0 186.9 L227.5 187.1 L228.0 187.0 L228.5 186.3 L229.0 186.8 L229.5 186.5 L230.0 187.4 L230.5 187.0 L231.0 187.4 L231.5 187.4 L232.0 187.0 L232.5 186.8 L233.0 187.0 L233.5 186.8 L234.0 187.2 L234.5 187.1 L235.0 186.3 L235.5 186.6 L236.0 187.2 L236.5 187.5 L237.0 186.5 L237.5 187.4 L238.0 186.5 L238.5 186.2 L239.0 187.2 L239.5 187.2 L240.0 187.1 L240.5 187.0 L241.0 186.3 L241.5 187.2 L242.0 187.3 L242.5 187.2 L243.0 187.4 L243.5 186.3 L244.0 187.4 L244.5 186.9 L245.0 187.1 L245.5 187.0 L246.0 187.5 L246.5 187.4 L247.0 186.8 L247.5 186.8 L248.0 186.8 L248.5 187.3 L249.0 186.7 L249.5 186.4 L250.0 186.4 L250.5 187.1 L251.0 186.6 L251.5 187.3 L252.0 187.5 L252.5 187.0 L253.0 186.9 L253.5 186.9 L254.0 186.7 L254.5 187.1 L255.0 186.8 L255.5 187.3 L256.0 187.1 L256.5 186.9 L257.0 187.3 L257.5 186.5 L258.0 187.4 L258.5 186.9 L259.0 187.6 L259.5 187.5 L260.0 187.4 L260.5 186.9 L261.0 187.4 L261.5 186.9 L262.0 187.4 L262.5 186.9 L263.0 186.8 L263.5 187.2 L264.0 187.6 L264.5 187.6 L265.0 187.5 L265.5 187.2 L266.0 187.3 L266.5 187.1 L267.0 187.2 L267.5 187.3 L268.0 187.2 L268.5 187.4 L269.0 187.4 L269.5 186.9 L270.0 187.7 L270.5 187.5 L271.0 186.9 L271.5 186.8 L272.0 187.6 L272.5 187.4 L273.0 187.7 L273.5 187.0 L274.0 187.6 L274.5 186.8 L275.0 187.4 L275.5 187.5 L276.0 187.7 L276.5 187.7 L277.0 187.6 L277.5 187.3 L278.0 187.3 L278.5 187.5 L279.0 187.6 L279.5 187.2 L280.0 187.4 L280.5 187.7 L281.0 186.9 L281.5 187.6 L282.0 187.5 L282.5 187.1 L283.0 187.6 L283.5 187.5 L284.0 187.3 L284.5 186.9 L285.0 187.0 L285.5 187.7 L286.0 187.7 L286.5 187.1 L287.0 187.7 L287.5 187.8 L288.0 187.0 L288.5 187.5 L289.0 187.1 L289.5 187.6 L290.0 186.1 L290.5 185.5 L291.0 186.4 L291.5 186.5 L292.0 185.5 L292.5 186.3 L293.0 186.5 L293.5 186.3 L294.0 185.1 L294.5 186.1 L295.0 185.8 L295.5 185.7 L296.0 185.9 L296.5 186.0 L297.0 186.3 L297.5 185.8 L298.0 185.9 L298.5 186.6 L299.0 186.2 L299.5 185.4 L300.0 185.8 L300.5 186.2 L301.0 185.7 L301.5 187.1 L302.0 185.4 L302.5 186.2 L303.0 187.1 L303.5 186.8 L304.0 186.3 L304.5 187.0 L305.0 186.5 L305.5 186.1 L306.0 185.6 L306.5 186.2 L307.0 186.7 L307.5 186.7 L308.0 185.9 L308.5 187.1 L309.0 186.7 L309.5 187.3 L310.0 187.1 L310.5 187.1 L311.0 187.3 L311.5 186.3 L312.0 187.0 L312.5 186.8 L313.0 187.3 L313.5 187.3 L314.0 186.7 L314.5 187.2 L315.0 187.4 L315.5 187.0 L316.0 187.1 L316.5 187.2 L317.0 187.2 L317.5 187.3 L318.0 186.4 L318.5 187.0 L319.0 186.5 L319.5 186.8 L320.0 187.3 L320.5 186.5 L321.0 187.4 L321.5 187.0 L322.0 186.9 L322.5 187.3 L323.0 186.8 L323.5 187.1 L324.0 187.2 L324.5 187.0 L325.0 187.0 L325.5 186.3 L326.0 187.2 L326.5 187.2 L327.0 186.5 L327.5 187.2 L328.0 187.2 L328.5 186.9 L329.0 186.8 L329.5 185.8 L330.0 187.2 L330.5 185.7 L331.0 187.2 L331.5 187.1 L332.0 186.7 L332.5 187.2 L333.0 187.3 L333.5 187.4 L334.0 187.3 L334.5 187.1 L335.0 186.2 L335.5 186.4 L336.0 186.2 L336.5 186.1 L337.0 187.3 L337.5 187.0 L338.0 187.3 L338.5 187.2 L339.0 186.2 L339.5 186.0 L340.0 187.3 L340.5 186.9 L341.0 186.9 L341.5 186.9 L342.0 186.3 L342.5 186.8 L343.0 186.6 L343.5 187.2 L344.0 187.0 L344.5 187.1 L345.0 186.4 L345.5 186.2 L346.0 186.5 L346.5 186.8 L347.0 187.3 L347.5 185.9 L348.0 186.2 L348.5 186.6 L349.0 186.3 L349.5 187.1 L350.0 186.6 L350.5 187.1 L351.0 186.5 L351.5 186.7 L352.0 186.4 L352.5 187.2 L353.0 186.8 L353.5 187.0 L354.0 186.2 L354.5 187.0 L355.0 187.2 L355.5 187.0 L356.0 186.3 L356.5 187.0 L357.0 186.1 L357.5 185.5 L358.0 186.3 L358.5 185.9 L359.0 185.5 L359.5 186.3 L360.0 186.9 L360.5 186.6 L361.0 186.4 L361.5 186.7 L362.0 186.3 L362.5 186.2 L363.0 186.5 L363.5 185.9 L364.0 186.9 L364.5 187.2 L365.0 185.8 L365.5 185.6 L366.0 186.9 L366.5 187.1 L367.0 187.0 L367.5 186.0 L368.0 186.4 L368.5 186.7 L369.0 187.2 L369.5 186.9 L370.0 187.0 L370.5 185.7 L371.0 187.2 L371.5 185.8 L372.0 186.8 L372.5 186.0 L373.0 185.4 L373.5 186.7 L374.0 186.3 L374.5 186.5 L375.0 186.7 L375.5 186.7 L376.0 186.5 L376.5 186.5 L377.0 186.2 L377.5 186.6 L378.0 186.9 L378.5 186.2 L379.0 187.2 L379.5 186.4 L380.0 186.4 L380.5 186.6 L381.0 185.8 L381.5 187.0 L382.0 186.3 L382.5 187.2 L383.0 186.7 L383.5 187.0 L384.0 186.2 L384.5 186.5 L385.0 186.4 L385.5 187.1 L386.0 187.4 L386.5 187.2 L387.0 186.2 L387.5 186.4 L388.0 187.3 L388.5 187.5 L389.0 187.3 L389.5 187.1 L390.0 187.4 L390.5 187.4 L391.0 187.0 L391.5 186.5 L392.0 187.1 L392.5 187.4 L393.0 187.0 L393.5 187.1 L394.0 187.2 L394.5 186.6 L395.0 186.9 L395.5 186.9 L396.0 187.0 L396.5 187.3 L397.0 187.2 L397.5 187.0 L398.0 187.4 L398.5 187.0 L399.0 187.0 L399.5 186.9 L400.0 187.5 L400.5 187.4 L401.0 186.7 L401.5 187.3 L402.0 186.8 L402.5 186.9 L403.0 187.5 L403.5 187.3 L404.0 186.7 L404.5 186.9 L405.0 187.2 L405.5 187.2 L406.0 186.5 L406.5 187.4 L407.0 186.8 L407.5 186.7 L408.0 187.0 L408.5 186.8 L409.0 186.9 L409.5 187.0 L410.0 186.7 L410.5 187.3 L411.0 187.2 L411.5 187.0 L412.0 186.2 L412.5 186.7 L413.0 186.0 L413.5 186.8 L414.0 187.0 L414.5 187.3 L415.0 186.4 L415.5 187.1 L416.0 185.8 L416.5 187.3 L417.0 186.6 L417.5 186.4 L418.0 187.2 L418.5 186.8 L419.0 186.4 L419.5 186.4 L420.0 187.2 L420.5 187.1 L421.0 186.7 L421.5 186.5 L422.0 187.0 L422.5 187.2 L423.0 187.0 L423.5 186.5 L424.0 186.7 L424.5 186.8 L425.0 186.4 L425.5 186.2 L426.0 186.9 L426.5 186.7 L427.0 186.5 L427.5 186.0 L428.0 187.1 L428.5 186.4 L429.0 187.1 L429.5 187.1 L430.0 186.7 L430.5 187.1 L431.0 185.8 L431.5 185.4 L432.0 186.0 L432.5 186.7 L433.0 185.8 L433.5 187.0 L434.0 186.3 L434.5 186.0 L435.0 187.2 L435.5 185.8 L436.0 186.9 L436.5 185.7 L437.0 185.8 L437.5 186.2 L438.0 185.9 L438.5 186.9 L439.0 187.0 L439.5 187.1 L440.0 186.7 L440.5 186.7 L441.0 187.2 L441.5 186.4 L442.0 187.0 L442.5 186.2 L443.0 186.4 L443.5 186.4 L444.0 187.1 L444.5 186.8 L445.0 187.2 L445.5 186.7 L446.0 186.0 L446.5 187.3 L447.0 187.2 L447.5 187.2 L448.0 185.8 L448.5 187.3 L449.0 186.4 L449.5 186.3 L450.0 187.2 L450.5 187.1 L451.0 186.9 L451.5 186.3 L452.0 186.9 L452.5 186.8 L453.0 187.4 L453.5 186.4 L454.0 187.0 L454.5 186.2 L455.0 187.1 L455.5 186.9 L456.0 187.0 L456.5 186.3 L457.0 187.4 L457.5 186.2 L458.0 187.2 L458.5 186.4 L459.0 187.1 L459.5 186.9 L460.0 187.0 L460.5 187.2 L461.0 187.3 L461.5 186.3 L462.0 186.3 L462.5 187.4 L463.0 186.9 L463.5 186.9 L464.0 187.2 L464.5 186.9 L465.0 187.5 L465.5 187.4 L466.0 187.5 L466.5 186.9 L467.0 186.3 L467.5 187.1 L468.0 187.5 L468.5 186.7 L469.0 187.1 L469.5 186.8 L470.0 187.2 L470.5 187.0 L471.0 187.2 L471.5 187.5 L472.0 187.4 L472.5 186.9 L473.0 187.3 L473.5 186.3 L474.0 186.2 L474.5 187.5 L475.0 187.3 L475.5 186.4 L476.0 186.7 L476.5 187.0 L477.0 186.6 L477.5 186.9 L478.0 186.1 L478.5 187.0 L479.0 187.4 L479.5 187.4 L480.0 186.6 L480.5 186.0 L481.0 186.2 L481.5 186.1 L482.0 187.4 L482.5 186.1 L483.0 187.2 L483.5 187.2 L484.0 185.9 L484.5 187.0 L485.0 186.0 L485.5 187.2 L486.0 187.3 L486.5 186.5 L487.0 186.5 L487.5 186.0 L488.0 186.8 L488.5 186.9 L489.0 187.3 L489.5 186.3 L490.0 186.3 L490.5 187.1 L491.0 186.8 L491.5 185.4 L492.0 186.1 L492.5 187.0 L493.0 187.3 L493.5 186.7 L494.0 187.4 L494.5 186.9 L495.0 187.5 L495.5 187.2 L496.0 187.2 L496.5 187.5 L497.0 187.2 L497.5 187.2 L498.0 187.1 L498.5 187.6 L499.0 187.2 L499.5 187.5 L500.0 187.8 L500.5 187.4 L501.0 187.4 L501.5 187.4 L502.0 187.8 L502.5 187.3 L503.0 187.5 L503.5 187.8 L504.0 187.5 L504.5 187.4 L505.0 187.1 L505.5 187.1 L506.0 187.5 L506.5 187.7 L507.0 187.4 L507.5 187.2 L508.0 187.8 L508.5 187.0 L509.0 187.5 L509.5 187.4 L510.0 187.3 L510.5 187.8 L511.0 187.8 L511.5 187.5 L512.0 187.9 L512.5 187.8 L513.0 187.8 L513.5 187.5 L514.0 187.5 L514.5 187.8 L515.0 187.8 L515.5 187.5 L516.0 187.6 L516.5 187.3 L517.0 187.4 L517.5 187.6 L518.0 187.6 L518.5 187.4 L519.0 187.8 L519.5 187.4 L520.0 187.6 L520.5 187.7 L521.0 187.5 L521.5 187.7 L522.0 187.7 L522.5 187.8 L523.0 187.5 L523.5 187.9 L524.0 187.9 L524.5 187.3 L525.0 187.6 L525.5 187.6 L526.0 187.6 L526.5 187.9 L527.0 187.7 L527.5 187.4 L528.0 187.6 L528.5 187.7 L529.0 188.0 L529.5 187.1 L530.0 187.1 L530.5 186.9 L531.0 187.3 L531.5 187.7 L532.0 187.7 L532.5 187.6 L533.0 187.6 L533.5 187.9 L534.0 187.3 L534.5 187.7 L535.0 187.9 L535.5 187.9 L536.0 187.8 L536.5 187.9 L537.0 187.8 L537.5 187.4 L538.0 187.4 L538.5 187.7 L539.0 187.9 L539.5 187.5 L540.0 187.9 L540.5 187.6 L541.0 187.9 L541.5 187.7 L542.0 188.0 L542.5 187.7 L543.0 187.3 L543.5 187.6 L544.0 187.8 L544.5 187.8 L545.0 187.5 L545.5 187.6 L546.0 187.9 L546.5 187.5 L547.0 187.9 L547.5 187.5 L548.0 188.0 L548.5 187.5 L549.0 187.8 L549.5 187.7 L550.0 188.0 L550.5 187.7 L551.0 187.9 L551.5 187.8 L552.0 188.0 L552.5 187.7 L553.0 188.0 L553.5 188.0 L554.0 188.0 L554.5 187.6 L555.0 188.0 L555.5 187.8 L556.0 187.4 L556.5 187.6 L557.0 187.7 L557.5 187.9 L558.0 187.5 L558.5 187.4 L559.0 187.4 L559.5 187.8 L560.0 188.0 L560.5 187.5 L561.0 187.6 L561.5 187.8 L562.0 187.9 L562.5 187.6 L563.0 187.9 L563.5 188.0 L564.0 187.9 L564.5 187.6 L565.0 187.6 L565.5 187.9 L566.0 187.7 L566.5 188.0 L567.0 187.9 L567.5 187.4 L568.0 187.7 L568.5 187.9 L569.0 187.4 L569.5 187.6 L570.0 187.5 L570.5 187.9 L571.0 187.8 L571.5 188.0 L572.0 187.9 L572.5 188.1 L573.0 188.0 L573.5 187.9 L574.0 188.0 L574.5 187.9 L575.0 187.9 L575.5 187.8 L576.0 187.8 L576.5 187.9 L577.0 188.0 L577.5 187.7 L578.0 187.9 L578.5 187.8 L579.0 188.1 L579.5 187.8 L580.0 187.8 L580.5 187.9 L581.0 187.9 L581.5 187.6 L582.0 188.0 L582.5 187.8 L583.0 187.8 L583.5 187.9 L584.0 187.9 L584.5 187.9 L585.0 188.0 L585.5 188.0 L586.0 188.0 L586.5 188.0 L587.0 187.8 L587.5 187.9 L588.0 188.0 L588.5 187.9 L589.0 188.1 L589.5 187.8 L590.0 188.0 L590.5 188.1 L591.0 188.1 L591.5 188.0 L592.0 188.0 L592.5 188.0 L593.0 188.1 L593.5 187.4 L594.0 187.8 L594.5 187.9 L595.0 187.9 L595.5 188.0 L596.0 187.9 L596.5 187.7 L597.0 188.0 L597.5 187.8 L598.0 188.1 L598.5 188.1 L599.0 188.0 L599.5 188.0 L600.0 188.1 L600.0 189.0 L599.5 188.9 L599.0 188.7 L598.5 188.8 L598.0 188.7 L597.5 188.9 L597.0 188.9 L596.5 188.8 L596.0 188.9 L595.5 189.0 L595.0 189.2 L594.5 189.0 L594.0 189.0 L593.5 188.9 L593.0 189.0 L592.5 188.8 L592.0 188.9 L591.5 188.8 L591.0 189.0 L590.5 189.0 L590.0 189.0 L589.5 188.8 L589.0 188.8 L588.5 188.7 L588.0 188.8 L587.5 188.7 L587.0 188.8 L586.5 189.0 L586.0 188.9 L585.5 189.0 L585.0 188.9 L584.5 188.8 L584.0 189.0 L583.5 189.1 L583.0 189.0 L582.5 188.8 L582.0 189.0 L581.5 188.9 L581.0 189.4 L580.5 188.8 L580.0 188.7 L579.5 188.8 L579.0 188.8 L578.5 188.7 L578.0 189.1 L577.5 188.8 L577.0 188.8 L576.5 188.9 L576.0 189.1 L575.5 189.1 L575.0 188.9 L574.5 188.9 L574.0 189.2 L573.5 188.8 L573.0 189.2 L572.5 188.9 L572.0 188.9 L571.5 189.0 L571.0 188.9 L570.5 189.3 L570.0 189.3 L569.5 189.1 L569.0 188.9 L568.5 189.4 L568.0 189.3 L567.5 189.1 L567.0 188.7 L566.5 188.9 L566.0 188.9 L565.5 188.9 L565.0 189.2 L564.5 188.8 L564.0 188.8 L563.5 188.9 L563.0 188.9 L562.5 189.1 L562.0 189.0 L561.5 189.3 L561.0 188.9 L560.5 188.9 L560.0 189.0 L559.5 189.0 L559.0 189.4 L558.5 189.3 L558.0 189.3 L557.5 188.9 L557.0 189.2 L556.5 189.2 L556.0 189.0 L555.5 189.0 L555.0 188.9 L554.5 189.0 L554.0 188.8 L553.5 188.8 L553.0 188.9 L552.5 188.8 L552.0 188.8 L551.5 188.9 L551.0 189.3 L550.5 188.8 L550.0 189.0 L549.5 189.0 L549.0 189.3 L548.5 188.8 L548.0 189.1 L547.5 189.0 L547.0 189.3 L546.5 189.1 L546.0 189.1 L545.5 189.1 L545.0 188.9 L544.5 189.3 L544.0 189.0 L543.5 189.4 L543.0 189.1 L542.5 189.3 L542.0 188.8 L541.5 189.1 L541.0 188.8 L540.5 189.2 L540.0 189.1 L539.5 189.3 L539.0 189.0 L538.5 189.2 L538.0 188.9 L537.5 189.3 L537.0 189.1 L536.5 188.9 L536.0 189.3 L535.5 189.3 L535.0 189.4 L534.5 189.5 L534.0 189.1 L533.5 189.1 L533.0 188.9 L532.5 189.1 L532.0 189.7 L531.5 189.2 L531.0 189.4 L530.5 189.2 L530.0 189.7 L529.5 189.2 L529.0 189.3 L528.5 189.1 L528.0 188.8 L527.5 189.2 L527.0 189.0 L526.5 189.1 L526.0 189.2 L525.5 189.1 L525.0 189.0 L524.5 189.0 L524.0 189.5 L523.5 188.9 L523.0 189.0 L522.5 189.2 L522.0 189.4 L521.5 189.3 L521.0 189.0 L520.5 189.5 L520.0 189.4 L519.5 189.0 L519.0 189.2 L518.5 189.1 L518.0 189.8 L517.5 189.0 L517.0 189.9 L516.5 189.8 L516.0 188.9 L515.5 189.1 L515.0 189.4 L514.5 189.4 L514.0 189.3 L513.5 189.2 L513.0 189.2 L512.5 188.9 L512.0 189.2 L511.5 189.2 L511.0 189.0 L510.5 189.3 L510.0 189.6 L509.5 189.6 L509.0 189.4 L508.5 189.8 L508.0 189.3 L507.5 189.2 L507.0 189.3 L506.5 189.4 L506.0 189.4 L505.5 189.1 L505.0 189.2 L504.5 189.7 L504.0 189.0 L503.5 189.1 L503.0 189.0 L502.5 189.1 L502.0 189.5 L501.5 189.2 L501.0 189.3 L500.5 189.0 L500.0 189.2 L499.5 189.8 L499.0 189.1 L498.5 189.0 L498.0 189.0 L497.5 189.3 L497.0 189.4 L496.5 189.5 L496.0 190.0 L495.5 189.3 L495.0 189.8 L494.5 189.2 L494.0 189.7 L493.5 189.5 L493.0 189.7 L492.5 190.7 L492.0 189.9 L491.5 190.6 L491.0 190.6 L490.5 190.5 L490.0 189.6 L489.5 190.2 L489.0 189.8 L488.5 190.2 L488.0 190.1 L487.5 189.5 L487.0 189.6 L486.5 190.2 L486.0 190.6 L485.5 189.7 L485.0 189.6 L484.5 190.9 L484.0 189.8 L483.5 189.9 L483.0 190.1 L482.5 189.6 L482.0 190.5 L481.5 189.7 L481.0 189.8 L480.5 189.5 L480.0 189.6 L479.5 189.5 L479.0 189.6 L478.5 190.3 L478.0 189.6 L477.5 189.5 L477.0 190.6 L476.5 189.4 L476.0 190.4 L475.5 189.8 L475.0 189.8 L474.5 190.1 L474.0 190.2 L473.5 189.4 L473.0 189.5 L472.5 189.6 L472.0 189.4 L471.5 189.8 L471.0 189.4 L470.5 189.6 L470.0 189.3 L469.5 190.1 L469.0 190.1 L468.5 189.3 L468.0 189.5 L467.5 190.5 L467.0 190.0 L466.5 189.5 L466.0 189.7 L465.5 190.2 L465.0 189.7 L464.5 189.8 L464.0 189.4 L463.5 189.7 L463.0 189.4 L462.5 189.6 L462.0 189.3 L461.5 190.1 L461.0 189.4 L460.5 189.7 L460.0 190.1 L459.5 190.0 L459.0 190.6 L458.5 189.7 L458.0 189.5 L457.5 189.5 L457.0 189.6 L456.5 190.0 L456.0 189.7 L455.5 189.5 L455.0 190.1 L454.5 189.5 L454.0 189.5 L453.5 189.6 L453.0 190.7 L452.5 190.0 L452.0 189.9 L451.5 190.1 L451.0 190.1 L450.5 189.9 L450.0 189.5 L449.5 190.1 L449.0 189.8 L448.5 190.7 L448.0 190.2 L447.5 190.1 L447.0 189.7 L446.5 190.5 L446.0 189.9 L445.5 189.7 L445.0 189.9 L444.5 189.9 L444.0 190.0 L443.5 190.7 L443.0 189.7 L442.5 190.6 L442.0 190.1 L441.5 190.0 L441.0 189.8 L440.5 189.9 L440.0 189.7 L439.5 191.3 L439.0 190.5 L438.5 190.6 L438.0 190.5 L437.5 190.4 L437.0 190.7 L436.5 189.8 L436.0 191.0 L435.5 189.9 L435.0 190.0 L434.5 190.7 L434.0 190.2 L433.5 189.8 L433.0 189.9 L432.5 190.0 L432.0 191.4 L431.5 189.6 L431.0 189.6 L430.5 189.7 L430.0 189.8 L429.5 190.6 L429.0 191.3 L428.5 189.9 L428.0 189.8 L427.5 189.6 L427.0 191.0 L426.5 190.2 L426.0 191.0 L425.5 190.7 L425.0 190.5 L424.5 190.1 L424.0 191.2 L423.5 190.2 L423.0 190.1 L422.5 190.0 L422.0 189.7 L421.5 189.8 L421.0 190.7 L420.5 190.1 L420.0 189.7 L419.5 190.0 L419.0 190.5 L418.5 190.5 L418.0 191.0 L417.5 190.2 L417.0 189.7 L416.5 189.6 L416.0 189.6 L415.5 190.9 L415.0 189.5 L414.5 190.5 L414.0 190.4 L413.5 190.6 L413.0 189.8 L412.5 189.8 L412.0 190.8 L411.5 190.2 L411.0 190.5 L410.5 189.5 L410.0 190.2 L409.5 189.8 L409.0 189.4 L408.5 190.0 L408.0 189.4 L407.5 189.5 L407.0 189.6 L406.5 189.9 L406.0 189.4 L405.5 190.1 L405.0 189.7 L404.5 190.3 L404.0 189.3 L403.5 189.4 L403.0 189.7 L402.5 190.3 L402.0 190.5 L401.5 189.4 L401.0 189.7 L400.5 189.7 L400.0 189.8 L399.5 189.3 L399.0 190.4 L398.5 189.3 L398.0 190.5 L397.5 189.6 L397.0 190.4 L396.5 189.9 L396.0 189.9 L395.5 189.6 L395.0 189.6 L394.5 189.5 L394.0 190.5 L393.5 189.7 L393.0 189.7 L392.5 189.3 L392.0 190.5 L391.5 189.8 L391.0 190.4 L390.5 189.3 L390.0 190.6 L389.5 189.7 L389.0 189.8 L388.5 190.4 L388.0 190.0 L387.5 189.5 L387.0 189.6 L386.5 189.8 L386.0 189.4 L385.5 189.7 L385.0 189.6 L384.5 189.5 L384.0 190.1 L383.5 189.9 L383.0 189.9 L382.5 189.7 L382.0 190.3 L381.5 189.5 L381.0 191.0 L380.5 189.8 L380.0 190.1 L379.5 189.9 L379.0 190.2 L378.5 189.6 L378.0 190.2 L377.5 191.2 L377.0 190.5 L376.5 190.0 L376.0 190.2 L375.5 189.8 L375.0 190.2 L374.5 189.8 L374.0 189.9 L373.5 191.5 L373.0 191.2 L372.5 190.4 L372.0 191.9 L371.5 191.4 L371.0 189.7 L370.5 189.9 L370.0 190.9 L369.5 190.4 L369.0 190.3 L368.5 190.6 L368.0 190.1 L367.5 190.5 L367.0 190.7 L366.5 189.9 L366.0 190.8 L365.5 190.2 L365.0 190.0 L364.5 190.9 L364.0 189.9 L363.5 189.8 L363.0 190.3 L362.5 190.5 L362.0 191.1 L361.5 190.1 L361.0 190.6 L360.5 190.8 L360.0 190.1 L359.5 190.2 L359.0 190.0 L358.5 189.9 L358.0 189.8 L357.5 190.2 L357.0 189.8 L356.5 190.6 L356.0 191.3 L355.5 190.3 L355.0 189.7 L354.5 189.9 L354.0 190.0 L353.5 189.9 L353.0 190.5 L352.5 191.1 L352.0 191.2 L351.5 189.8 L351.0 190.5 L350.5 190.8 L350.0 190.1 L349.5 190.8 L349.0 190.5 L348.5 190.6 L348.0 190.6 L347.5 189.6 L347.0 191.0 L346.5 189.9 L346.0 189.6 L345.5 189.9 L345.0 190.7 L344.5 190.2 L344.0 190.9 L343.5 190.6 L343.0 189.6 L342.5 190.7 L342.0 189.5 L341.5 190.0 L341.0 189.7 L340.5 189.9 L340.0 190.4 L339.5 190.8 L339.0 190.0 L338.5 189.8 L338.0 190.7 L337.5 189.7 L337.0 189.6 L336.5 189.6 L336.0 190.1 L335.5 189.6 L335.0 190.8 L334.5 189.4 L334.0 189.6 L333.5 189.7 L333.0 190.1 L332.5 190.8 L332.0 189.6 L331.5 190.4 L331.0 189.8 L330.5 190.5 L330.0 190.1 L329.5 190.1 L329.0 189.8 L328.5 189.8 L328.0 189.3 L327.5 190.5 L327.0 189.7 L326.5 190.4 L326.0 189.4 L325.5 189.3 L325.0 189.4 L324.5 189.9 L324.0 189.8 L323.5 189.5 L323.0 190.0 L322.5 189.6 L322.0 189.8 L321.5 189.8 L321.0 190.2 L320.5 189.5 L320.0 189.6 L319.5 189.3 L319.0 189.5 L318.5 189.7 L318.0 189.5 L317.5 189.6 L317.0 189.3 L316.5 190.7 L316.0 189.9 L315.5 190.2 L315.0 189.7 L314.5 189.9 L314.0 189.9 L313.5 190.0 L313.0 189.8 L312.5 190.9 L312.0 189.9 L311.5 189.7 L311.0 189.5 L310.5 189.9 L310.0 190.7 L309.5 190.1 L309.0 189.6 L308.5 190.5 L308.0 190.7 L307.5 189.9 L307.0 190.6 L306.5 190.3 L306.0 190.4 L305.5 189.7 L305.0 189.7 L304.5 189.7 L304.0 190.9 L303.5 191.0 L303.0 189.7 L302.5 190.5 L302.0 190.4 L301.5 190.8 L301.0 189.9 L300.5 189.8 L300.0 190.0 L299.5 190.6 L299.0 191.3 L298.5 191.2 L298.0 191.0 L297.5 190.9 L297.0 190.2 L296.5 190.1 L296.0 192.0 L295.5 190.1 L295.0 190.3 L294.5 190.1 L294.0 190.5 L293.5 191.0 L293.0 191.0 L292.5 190.4 L292.0 191.2 L291.5 190.6 L291.0 191.6 L290.5 192.1 L290.0 190.1 L289.5 189.8 L289.0 189.0 L288.5 189.1 L288.0 189.3 L287.5 189.1 L287.0 189.3 L286.5 189.1 L286.0 189.2 L285.5 189.1 L285.0 189.0 L284.5 189.2 L284.0 189.1 L283.5 189.7 L283.0 189.3 L282.5 189.1 L282.0 189.5 L281.5 189.1 L281.0 189.5 L280.5 189.1 L280.0 189.2 L279.5 189.3 L279.0 189.4 L278.5 189.1 L278.0 189.7 L277.5 189.3 L277.0 189.4 L276.5 189.7 L276.0 189.4 L275.5 189.4 L275.0 189.4 L274.5 189.1 L274.0 189.4 L273.5 189.4 L273.0 189.1 L272.5 189.3 L272.0 189.3 L271.5 189.5 L271.0 190.1 L270.5 189.4 L270.0 189.8 L269.5 189.4 L269.0 189.5 L268.5 189.3 L268.0 189.3 L267.5 189.1 L267.0 189.2 L266.5 189.7 L266.0 189.8 L265.5 189.9 L265.0 189.3 L264.5 189.8 L264.0 189.5 L263.5 189.5 L263.0 189.4 L262.5 189.4 L262.0 189.4 L261.5 189.5 L261.0 189.6 L260.5 189.6 L260.0 189.7 L259.5 189.4 L259.0 189.6 L258.5 189.5 L258.0 189.2 L257.5 189.7 L257.0 189.6 L256.5 190.1 L256.0 190.3 L255.5 189.3 L255.0 189.5 L254.5 189.3 L254.0 189.3 L253.5 190.0 L253.0 190.0 L252.5 190.0 L252.0 189.2 L251.5 190.0 L251.0 189.5 L250.5 189.6 L250.0 189.5 L249.5 189.3 L249.0 189.9 L248.5 189.3 L248.0 190.4 L247.5 190.2 L247.0 190.1 L246.5 190.1 L246.0 189.6 L245.5 189.4 L245.0 189.4 L244.5 189.9 L244.0 189.9 L243.5 189.5 L243.0 189.8 L242.5 190.0 L242.0 189.3 L241.5 189.4 L241.0 189.8 L240.5 190.5 L240.0 189.4 L239.5 189.4 L239.0 190.1 L238.5 189.4 L238.0 190.1 L237.5 189.7 L237.0 189.9 L236.5 189.3 L236.0 189.7 L235.5 190.1 L235.0 189.9 L234.5 190.4 L234.0 189.7 L233.5 189.8 L233.0 189.4 L232.5 190.1 L232.0 189.6 L231.5 189.9 L231.0 190.7 L230.5 189.4 L230.0 190.7 L229.5 189.4 L229.0 189.5 L228.5 189.9 L228.0 190.7 L227.5 189.7 L227.0 189.6 L226.5 190.2 L226.0 190.6 L225.5 190.2 L225.0 189.7 L224.5 189.6 L224.0 189.5 L223.5 189.9 L223.0 189.9 L222.5 189.8 L222.0 190.9 L221.5 190.3 L221.0 189.8 L220.5 189.6 L220.0 189.7 L219.5 190.7 L219.0 191.2 L218.5 190.3 L218.0 190.2 L217.5 190.5 L217.0 189.7 L216.5 190.5 L216.0 190.9 L215.5 190.7 L215.0 190.2 L214.5 190.5 L214.0 189.7 L213.5 190.2 L213.0 190.3 L212.5 189.7 L212.0 190.8 L211.5 189.6 L211.0 190.5 L210.5 190.1 L210.0 190.0 L209.5 189.9 L209.0 190.9 L208.5 191.0 L208.0 190.2 L207.5 189.8 L207.0 191.2 L206.5 189.7 L206.0 190.1 L205.5 191.1 L205.0 189.9 L204.5 190.0 L204.0 189.9 L203.5 189.8 L203.0 189.8 L202.5 190.2 L202.0 190.7 L201.5 190.9 L201.0 190.5 L200.5 189.7 L200.0 189.8 L199.5 189.9 L199.0 190.4 L198.5 190.9 L198.0 189.8 L197.5 189.9 L197.0 189.7 L196.5 189.7 L196.0 190.3 L195.5 189.9 L195.0 189.9 L194.5 190.3 L194.0 191.4 L193.5 189.9 L193.0 190.4 L192.5 190.1 L192.0 190.1 L191.5 190.3 L191.0 190.2 L190.5 190.1 L190.0 190.1 L189.5 189.8 L189.0 189.9 L188.5 191.5 L188.0 189.9 L187.5 190.6 L187.0 191.3 L186.5 191.9 L186.0 191.1 L185.5 190.6 L185.0 190.7 L184.5 190.4 L184.0 191.6 L183.5 190.2 L183.0 191.0 L182.5 191.0 L182.0 192.5 L181.5 190.6 L181.0 191.1 L180.5 190.3 L180.0 190.6 L179.5 192.7 L179.0 192.5 L178.5 190.7 L178.0 190.7 L177.5 192.4 L177.0 191.4 L176.5 190.3 L176.0 189.6 L175.5 189.9 L175.0 189.5 L174.5 189.5 L174.0 189.8 L173.5 190.1 L173.0 189.8 L172.5 189.8 L172.0 190.2 L171.5 190.0 L171.0 190.4 L170.5 189.7 L170.0 189.8 L169.5 190.7 L169.0 190.0 L168.5 190.2 L168.0 189.5 L167.5 190.2 L167.0 189.5 L166.5 189.5 L166.0 189.6 L165.5 190.0 L165.0 189.9 L164.5 189.9 L164.0 189.5 L163.5 189.9 L163.0 189.8 L162.5 190.1 L162.0 190.1 L161.5 189.7 L161.0 190.2 L160.5 189.6 L160.0 190.1 L159.5 190.1 L159.0 189.5 L158.5 189.5 L158.0 190.1 L157.5 190.5 L157.0 189.6 L156.5 189.9 L156.0 190.2 L155.5 189.6 L155.0 189.9 L154.5 189.7 L154.0 190.2 L153.5 189.8 L153.0 189.9 L152.5 190.0 L152.0 190.7 L151.5 189.5 L151.0 189.6 L150.5 190.8 L150.0 190.1 L149.5 189.8 L149.0 189.6 L148.5 190.9 L148.0 189.9 L147.5 190.4 L147.0 190.5 L146.5 190.1 L146.0 190.1 L145.5 189.8 L145.0 190.8 L144.5 191.0 L144.0 191.3 L143.5 189.8 L143.0 190.8 L142.5 190.8 L142.0 189.8 L141.5 189.9 L141.0 189.9 L140.5 190.4 L140.0 189.7 L139.5 190.4 L139.0 190.8 L138.5 190.3 L138.0 189.7 L137.5 189.9 L137.0 189.8 L136.5 190.3 L136.0 191.1 L135.5 190.5 L135.0 191.1 L134.5 189.5 L134.0 189.7 L133.5 190.6 L133.0 190.2 L132.5 189.8 L132.0 190.0 L131.5 190.1 L131.0 190.2 L130.5 189.8 L130.0 190.1 L129.5 191.5 L129.0 191.4 L128.5 191.7 L128.0 189.8 L127.5 190.1 L127.0 189.6 L126.5 190.1 L126.0 190.2 L125.5 191.0 L125.0 189.7 L124.5 189.5 L124.0 190.1 L123.5 190.8 L123.0 189.8 L122.5 190.0 L122.0 190.3 L121.5 189.7 L121.0 190.6 L120.5 190.1 L120.0 190.2 L119.5 190.4 L119.0 190.5 L118.5 190.0 L118.0 189.8 L117.5 190.2 L117.0 190.8 L116.5 190.4 L116.0 189.8 L115.5 190.6 L115.0 190.6 L114.5 190.3 L114.0 189.8 L113.5 191.4 L113.0 189.9 L112.5 189.9 L112.0 190.0 L111.5 190.5 L111.0 191.0 L110.5 191.5 L110.0 191.5 L109.5 191.5 L109.0 191.7 L108.5 190.4 L108.0 191.7 L107.5 191.0 L107.0 191.4 L106.5 190.7 L106.0 190.7 L105.5 191.7 L105.0 190.6 L104.5 190.6 L104.0 190.2 L103.5 191.0 L103.0 190.0 L102.5 189.9 L102.0 190.1 L101.5 190.4 L101.0 191.0 L100.5 191.7 L100.0 190.0 L99.5 190.5 L99.0 191.3 L98.5 190.2 L98.0 190.7 L97.5 190.3 L97.0 190.9 L96.5 191.6 L96.0 190.9 L95.5 190.3 L95.0 190.2 L94.5 191.9 L94.0 191.1 L93.5 190.6 L93.0 190.6 L92.5 190.5 L92.0 190.8 L91.5 192.0 L91.0 191.4 L90.5 193.7 L90.0 192.9 L89.5 194.2 L89.0 190.4 L88.5 189.5 L88.0 190.0 L87.5 189.6 L87.0 190.6 L86.5 189.6 L86.0 189.5 L85.5 190.9 L85.0 189.8 L84.5 189.7 L84.0 190.3 L83.5 190.8 L83.0 190.6 L82.5 190.0 L82.0 190.4 L81.5 190.4 L81.0 190.6 L80.5 189.7 L80.0 190.7 L79.5 191.0 L79.0 189.6 L78.5 189.7 L78.0 190.3 L77.5 190.7 L77.0 191.2 L76.5 190.8 L76.0 189.8 L75.5 190.6 L75.0 191.3 L74.5 189.7 L74.0 190.7 L73.5 190.8 L73.0 189.8 L72.5 190.0 L72.0 189.8 L71.5 190.8 L71.0 190.6 L70.5 190.7 L70.0 190.7 L69.5 190.6 L69.0 191.1 L68.5 190.7 L68.0 192.0 L67.5 191.3 L67.0 191.0 L66.5 193.4 L66.0 190.9 L65.5 192.2 L65.0 194.4 L64.5 189.9 L64.0 190.1 L63.5 190.1 L63.0 189.6 L62.5 190.2 L62.0 190.3 L61.5 190.1 L61.0 189.8 L60.5 190.4 L60.0 190.5 L59.5 190.9 L59.0 191.2 L58.5 190.0 L58.0 191.8 L57.5 190.9 L57.0 190.3 L56.5 191.1 L56.0 190.9 L55.5 191.6 L55.0 191.2 L54.5 192.6 L54.0 190.9 L53.5 192.4 L53.0 191.5 L52.5 190.9 L52.0 190.6 L51.5 190.0 L51.0 189.7 L50.5 189.7 L50.0 190.1 L49.5 189.9 L49.0 190.5 L48.5 190.0 L48.0 190.3 L47.5 189.9 L47.0 190.2 L46.5 190.2 L46.0 191.8 L45.5 191.3 L45.0 190.1 L44.5 190.8 L44.0 190.5 L43.5 191.0 L43.0 190.5 L42.5 190.3 L42.0 191.2 L41.5 191.6 L41.0 192.6 L40.5 193.0 L40.0 192.8 L39.5 190.6 L39.0 189.7 L38.5 190.2 L38.0 189.7 L37.5 189.8 L37.0 189.7 L36.5 190.2 L36.0 189.8 L35.5 189.7 L35.0 190.2 L34.5 190.1 L34.0 190.4 L33.5 190.5 L33.0 189.9 L32.5 191.1 L32.0 191.0 L31.5 191.8 L31.0 190.2 L30.5 190.8 L30.0 191.5 L29.5 190.5 L29.0 190.3 L28.5 190.7 L28.0 192.7 L27.5 191.5 L27.0 189.6 L26.5 189.8 L26.0 190.7 L25.5 190.7 L25.0 189.8 L24.5 190.3 L24.0 191.3 L23.5 190.2 L23.0 190.4 L22.5 191.5 L22.0 190.4 L21.5 190.1 L21.0 190.2 L20.5 191.4 L20.0 190.2 L19.5 190.1 L19.0 190.8 L18.5 191.4 L18.0 190.2 L17.5 190.8 L17.0 190.9 L16.5 191.0 L16.0 191.4 L15.5 192.1 L15.0 192.8 L14.5 192.7 L14.0 190.1 L13.5 190.9 L13.0 189.5 L12.5 189.7 L12.0 189.8 L11.5 191.0 L11.0 189.7 L10.5 191.3 L10.0 191.3 L9.5 191.4 L9.0 190.7 L8.5 190.3 L8.0 190.0 L7.5 190.3 L7.0 190.0 L6.5 190.1 L6.0 191.5 L5.5 190.2 L5.0 190.1 L4.5 190.4 L4.0 190.6 L3.5 192.7 L3.0 190.9 L2.5 190.8 L2.0 191.9 L1.5 190.0 L1.0 190.6 L0.5 189.6 L0.0 190.0 Z" fill="#18141c" opacity="0.95"/></svg>
<div style="position:absolute;left:13.55px;top:171.5px;width:1px;height:23.5px;background:repeating-linear-gradient(to bottom,rgba(90,40,90,0.15) 0 1.5px,transparent 1.5px 3px)"></div>
<div style="position:absolute;left:38.7px;top:171.5px;width:1px;height:23.5px;background:repeating-linear-gradient(to bottom,rgba(90,40,90,0.15) 0 1.5px,transparent 1.5px 3px)"></div>
<div style="position:absolute;left:63.849999999999994px;top:171.5px;width:1px;height:23.5px;background:repeating-linear-gradient(to bottom,rgba(90,40,90,0.15) 0 1.5px,transparent 1.5px 3px)"></div>
<div style="position:absolute;left:88.99999999999999px;top:171.5px;width:1px;height:23.5px;background:repeating-linear-gradient(to bottom,rgba(90,40,90,0.15) 0 1.5px,transparent 1.5px 3px)"></div>
<div style="position:absolute;left:114.14999999999999px;top:171.5px;width:1px;height:23.5px;background:repeating-linear-gradient(to bottom,rgba(90,40,90,0.15) 0 1.5px,transparent 1.5px 3px)"></div>
<div style="position:absolute;left:139.3px;top:171.5px;width:1px;height:23.5px;background:repeating-linear-gradient(to bottom,rgba(90,40,90,0.15) 0 1.5px,transparent 1.5px 3px)"></div>
<div style="position:absolute;left:164.45px;top:171.5px;width:1px;height:23.5px;background:repeating-linear-gradient(to bottom,rgba(90,40,90,0.15) 0 1.5px,transparent 1.5px 3px)"></div>
<div style="position:absolute;left:189.6px;top:171.5px;width:1px;height:23.5px;background:repeating-linear-gradient(to bottom,rgba(90,40,90,0.15) 0 1.5px,transparent 1.5px 3px)"></div>
<div style="position:absolute;left:214.75px;top:171.5px;width:1px;height:23.5px;background:repeating-linear-gradient(to bottom,rgba(90,40,90,0.15) 0 1.5px,transparent 1.5px 3px)"></div>
<div style="position:absolute;left:239.9px;top:171.5px;width:1px;height:23.5px;background:repeating-linear-gradient(to bottom,rgba(90,40,90,0.15) 0 1.5px,transparent 1.5px 3px)"></div>
<div style="position:absolute;left:265.05px;top:171.5px;width:1px;height:23.5px;background:repeating-linear-gradient(to bottom,rgba(90,40,90,0.15) 0 1.5px,transparent 1.5px 3px)"></div>
<div style="position:absolute;left:290.2px;top:171.5px;width:1px;height:23.5px;background:repeating-linear-gradient(to bottom,rgba(90,40,90,0.15) 0 1.5px,transparent 1.5px 3px)"></div>
<div style="position:absolute;left:315.34999999999997px;top:171.5px;width:1px;height:23.5px;background:repeating-linear-gradient(to bottom,rgba(90,40,90,0.15) 0 1.5px,transparent 1.5px 3px)"></div>
<div style="position:absolute;left:340.5px;top:171.5px;width:1px;height:23.5px;background:repeating-linear-gradient(to bottom,rgba(90,40,90,0.15) 0 1.5px,transparent 1.5px 3px)"></div>
<div style="position:absolute;left:365.65px;top:171.5px;width:1px;height:23.5px;background:repeating-linear-gradient(to bottom,rgba(90,40,90,0.15) 0 1.5px,transparent 1.5px 3px)"></div>
<div style="position:absolute;left:390.8px;top:171.5px;width:1px;height:23.5px;background:repeating-linear-gradient(to bottom,rgba(90,40,90,0.15) 0 1.5px,transparent 1.5px 3px)"></div>
<div style="position:absolute;left:415.95px;top:171.5px;width:1px;height:23.5px;background:repeating-linear-gradient(to bottom,rgba(90,40,90,0.15) 0 1.5px,transparent 1.5px 3px)"></div>
<div style="position:absolute;left:441.09999999999997px;top:171.5px;width:1px;height:23.5px;background:repeating-linear-gradient(to bottom,rgba(90,40,90,0.15) 0 1.5px,transparent 1.5px 3px)"></div>
<div style="position:absolute;left:466.25px;top:171.5px;width:1px;height:23.5px;background:repeating-linear-gradient(to bottom,rgba(90,40,90,0.15) 0 1.5px,transparent 1.5px 3px)"></div>
<div style="position:absolute;left:491.4px;top:171.5px;width:1px;height:23.5px;background:repeating-linear-gradient(to bottom,rgba(90,40,90,0.15) 0 1.5px,transparent 1.5px 3px)"></div>
<div style="position:absolute;left:516.55px;top:171.5px;width:1px;height:23.5px;background:repeating-linear-gradient(to bottom,rgba(90,40,90,0.15) 0 1.5px,transparent 1.5px 3px)"></div>
<div style="position:absolute;left:541.6999999999999px;top:171.5px;width:1px;height:23.5px;background:repeating-linear-gradient(to bottom,rgba(90,40,90,0.15) 0 1.5px,transparent 1.5px 3px)"></div>
<div style="position:absolute;left:566.8499999999999px;top:171.5px;width:1px;height:23.5px;background:repeating-linear-gradient(to bottom,rgba(90,40,90,0.15) 0 1.5px,transparent 1.5px 3px)"></div>
<div style="position:absolute;left:591.9999999999999px;top:171.5px;width:1px;height:23.5px;background:repeating-linear-gradient(to bottom,rgba(90,40,90,0.15) 0 1.5px,transparent 1.5px 3px)"></div>
<div style="position:absolute;left:0px;top:195px;width:600px;height:17px;background:#2a2d35;"></div>
<div style="position:absolute;left:0px;top:196px;width:11px;height:16.7px;background:#8b86f3;"></div>
<svg style="position:absolute;left:0;top:195px" width="130" height="17"><path d="M2.2 6.5 L8 10.2 L5.4 10.9 L3.4 13.6 Z" fill="#fff"/><path d="M16.8 11.3 L22 6.1 L23.4 7.5 L18.2 12.7 L16.5 12.9 Z" fill="#a8a8ac"/><circle cx="32.3" cy="11.6" r="1.5" stroke="#a8a8ac" stroke-width="0.9" fill="none"/><circle cx="36.6" cy="11.6" r="1.5" stroke="#a8a8ac" stroke-width="0.9" fill="none"/><path d="M33.2 10.2 L36.8 5.8 M35.7 10.2 L32.6 5.8" stroke="#a8a8ac" stroke-width="0.9"/><path d="M48.3 12.1 Q50.5 8.5 52.8 10.8 L56.8 11.2" stroke="#c4c4c8" stroke-width="1.1" fill="none"/><path d="M53.3 9.5 L56.5 6.3" stroke="#c4c4c8" stroke-width="1.3"/><path d="M55.2 16.8 L57.3 14.8 L57.3 16.8Z" fill="#a8a8ac"/><path d="M64 12.1 Q66.4 8 68.5 11" stroke="#c4c4c8" stroke-width="1.1" fill="none"/><path d="M68 9.5 L71 5.8" stroke="#c4c4c8" stroke-width="1.6"/><rect x="68.8" y="9.2" width="3" height="3" fill="#6e6e74"/><path d="M79 12.1 Q81.4 8 83.5 10.8 L87.5 11.2" stroke="#c4c4c8" stroke-width="1.1" fill="none"/><path d="M83.8 9.6 L87 5.8" stroke="#c4c4c8" stroke-width="1.6"/><path d="M94 12.5 C94.8 5, 96.5 5, 97 9 S98.8 13, 99.4 9 S101.5 5.5, 102.3 8.5" stroke="#c4c4c8" stroke-width="1" fill="none"/><path d="M108.8 10.5 C110.5 6.5, 112.5 12, 114.5 8.5 L117.8 6.5" stroke="#c4c4c8" stroke-width="1" fill="none"/><path d="M110 8.6 H113" stroke="#c4c4c8" stroke-width="0.8"/><path d="M113.5 12.3 H117" stroke="#8a8a90" stroke-width="0.8"/></svg>
<div style="position:absolute;left:0px;top:212px;width:600px;height:8px;background:#202126;"></div>
<div style="position:absolute;left:0px;top:217.8px;width:600px;height:1.2px;background:#34363c;"></div>
<div style="position:absolute;left:17.8px;top:212px;width:1px;height:7px;background:#3c3e44;"></div>
<div style="position:absolute;left:38.82px;top:212px;width:1px;height:7px;background:#3c3e44;"></div>
<div style="position:absolute;left:59.84px;top:212px;width:1px;height:7px;background:#3c3e44;"></div>
<div style="position:absolute;left:80.86px;top:212px;width:1px;height:7px;background:#3c3e44;"></div>
<div style="position:absolute;left:101.88px;top:212px;width:1px;height:7px;background:#3c3e44;"></div>
<div style="position:absolute;left:122.89999999999999px;top:212px;width:1px;height:7px;background:#3c3e44;"></div>
<div style="position:absolute;left:143.92000000000002px;top:212px;width:1px;height:7px;background:#3c3e44;"></div>
<div style="position:absolute;left:164.94px;top:212px;width:1px;height:7px;background:#3c3e44;"></div>
<div style="position:absolute;left:185.96px;top:212px;width:1px;height:7px;background:#3c3e44;"></div>
<div style="position:absolute;left:206.98000000000002px;top:212px;width:1px;height:7px;background:#3c3e44;"></div>
<div style="position:absolute;left:228.0px;top:212px;width:1px;height:7px;background:#3c3e44;"></div>
<div style="position:absolute;left:249.02px;top:212px;width:1px;height:7px;background:#3c3e44;"></div>
<div style="position:absolute;left:270.04px;top:212px;width:1px;height:7px;background:#3c3e44;"></div>
<div style="position:absolute;left:291.06px;top:212px;width:1px;height:7px;background:#44464c;"></div>
<div style="position:absolute;left:312.08px;top:212px;width:1px;height:7px;background:#3c3e44;"></div>
<div style="position:absolute;left:333.1px;top:212px;width:1px;height:7px;background:#3c3e44;"></div>
<div style="position:absolute;left:354.12px;top:212px;width:1px;height:7px;background:#3c3e44;"></div>
<div style="position:absolute;left:375.14px;top:212px;width:1px;height:7px;background:#3c3e44;"></div>
<div style="position:absolute;left:396.16px;top:212px;width:1px;height:7px;background:#3c3e44;"></div>
<div style="position:absolute;left:417.18px;top:212px;width:1px;height:7px;background:#3c3e44;"></div>
<div style="position:absolute;left:438.2px;top:212px;width:1px;height:7px;background:#3c3e44;"></div>
<div style="position:absolute;left:459.22px;top:212px;width:1px;height:7px;background:#3c3e44;"></div>
<div style="position:absolute;left:480.24px;top:212px;width:1px;height:7px;background:#3c3e44;"></div>
<div style="position:absolute;left:501.26px;top:212px;width:1px;height:7px;background:#3c3e44;"></div>
<div style="position:absolute;left:522.28px;top:212px;width:1px;height:7px;background:#3c3e44;"></div>
<div style="position:absolute;left:543.3px;top:212px;width:1px;height:7px;background:#3c3e44;"></div>
<div style="position:absolute;left:564.3199999999999px;top:212px;width:1px;height:7px;background:#3c3e44;"></div>
<div style="position:absolute;left:585.3399999999999px;top:212px;width:1px;height:7px;background:#3c3e44;"></div>
<div style="position:absolute;left:0px;top:219.7px;width:600px;height:253.8px;background:#222328;"></div>
<div style="position:absolute;left:0px;top:219.7px;width:600px;height:9.3px;background:#1d1e22;"></div>
<div style="position:absolute;left:0px;top:228.5px;width:600px;height:17.5px;background:#1d1e22;"></div>
<div style="position:absolute;left:0px;top:263.5px;width:600px;height:17.5px;background:#1d1e22;"></div>
<div style="position:absolute;left:0px;top:316px;width:600px;height:17.5px;background:#1d1e22;"></div>
<div style="position:absolute;left:0px;top:351px;width:600px;height:17.5px;background:#1d1e22;"></div>
<div style="position:absolute;left:0px;top:403.5px;width:600px;height:17.5px;background:#1d1e22;"></div>
<div style="position:absolute;left:0px;top:438.5px;width:600px;height:17.5px;background:#1d1e22;"></div>
<div style="position:absolute;left:17.8px;top:231.5px;width:1px;height:241.5px;background:repeating-linear-gradient(to bottom,rgba(100,102,110,0.14) 0 1.5px,transparent 1.5px 3px)"></div>
<div style="position:absolute;left:17.8px;top:228.5px;width:1px;height:3px;background:#3e4046;"></div>
<div style="position:absolute;left:38.82px;top:231.5px;width:1px;height:241.5px;background:repeating-linear-gradient(to bottom,rgba(120,122,130,0.3) 0 1.5px,transparent 1.5px 3px)"></div>
<div style="position:absolute;left:38.82px;top:228.5px;width:1px;height:3px;background:#3e4046;"></div>
<div style="position:absolute;left:59.84px;top:231.5px;width:1px;height:241.5px;background:repeating-linear-gradient(to bottom,rgba(100,102,110,0.14) 0 1.5px,transparent 1.5px 3px)"></div>
<div style="position:absolute;left:59.84px;top:228.5px;width:1px;height:3px;background:#3e4046;"></div>
<div style="position:absolute;left:80.86px;top:231.5px;width:1px;height:241.5px;background:repeating-linear-gradient(to bottom,rgba(100,102,110,0.14) 0 1.5px,transparent 1.5px 3px)"></div>
<div style="position:absolute;left:80.86px;top:228.5px;width:1px;height:3px;background:#3e4046;"></div>
<div style="position:absolute;left:101.88px;top:231.5px;width:1px;height:241.5px;background:repeating-linear-gradient(to bottom,rgba(100,102,110,0.14) 0 1.5px,transparent 1.5px 3px)"></div>
<div style="position:absolute;left:101.88px;top:228.5px;width:1px;height:3px;background:#3e4046;"></div>
<div style="position:absolute;left:122.89999999999999px;top:231.5px;width:1px;height:241.5px;background:repeating-linear-gradient(to bottom,rgba(120,122,130,0.3) 0 1.5px,transparent 1.5px 3px)"></div>
<div style="position:absolute;left:122.89999999999999px;top:228.5px;width:1px;height:3px;background:#3e4046;"></div>
<div style="position:absolute;left:143.92000000000002px;top:231.5px;width:1px;height:241.5px;background:repeating-linear-gradient(to bottom,rgba(100,102,110,0.14) 0 1.5px,transparent 1.5px 3px)"></div>
<div style="position:absolute;left:143.92000000000002px;top:228.5px;width:1px;height:3px;background:#3e4046;"></div>
<div style="position:absolute;left:164.94px;top:231.5px;width:1px;height:241.5px;background:repeating-linear-gradient(to bottom,rgba(100,102,110,0.14) 0 1.5px,transparent 1.5px 3px)"></div>
<div style="position:absolute;left:164.94px;top:228.5px;width:1px;height:3px;background:#3e4046;"></div>
<div style="position:absolute;left:185.96px;top:231.5px;width:1px;height:241.5px;background:repeating-linear-gradient(to bottom,rgba(100,102,110,0.14) 0 1.5px,transparent 1.5px 3px)"></div>
<div style="position:absolute;left:185.96px;top:228.5px;width:1px;height:3px;background:#3e4046;"></div>
<div style="position:absolute;left:206.98000000000002px;top:231.5px;width:1px;height:241.5px;background:repeating-linear-gradient(to bottom,rgba(120,122,130,0.3) 0 1.5px,transparent 1.5px 3px)"></div>
<div style="position:absolute;left:206.98000000000002px;top:228.5px;width:1px;height:3px;background:#3e4046;"></div>
<div style="position:absolute;left:228.0px;top:231.5px;width:1px;height:241.5px;background:repeating-linear-gradient(to bottom,rgba(100,102,110,0.14) 0 1.5px,transparent 1.5px 3px)"></div>
<div style="position:absolute;left:228.0px;top:228.5px;width:1px;height:3px;background:#3e4046;"></div>
<div style="position:absolute;left:249.02px;top:231.5px;width:1px;height:241.5px;background:repeating-linear-gradient(to bottom,rgba(100,102,110,0.14) 0 1.5px,transparent 1.5px 3px)"></div>
<div style="position:absolute;left:249.02px;top:228.5px;width:1px;height:3px;background:#3e4046;"></div>
<div style="position:absolute;left:270.04px;top:231.5px;width:1px;height:241.5px;background:repeating-linear-gradient(to bottom,rgba(100,102,110,0.14) 0 1.5px,transparent 1.5px 3px)"></div>
<div style="position:absolute;left:270.04px;top:228.5px;width:1px;height:3px;background:#3e4046;"></div>
<div style="position:absolute;left:291.06px;top:231.5px;width:1px;height:241.5px;background:repeating-linear-gradient(to bottom,rgba(140,142,150,0.4) 0 1.5px,transparent 1.5px 3px)"></div>
<div style="position:absolute;left:312.08px;top:231.5px;width:1px;height:241.5px;background:repeating-linear-gradient(to bottom,rgba(100,102,110,0.14) 0 1.5px,transparent 1.5px 3px)"></div>
<div style="position:absolute;left:312.08px;top:228.5px;width:1px;height:3px;background:#3e4046;"></div>
<div style="position:absolute;left:333.1px;top:231.5px;width:1px;height:241.5px;background:repeating-linear-gradient(to bottom,rgba(100,102,110,0.14) 0 1.5px,transparent 1.5px 3px)"></div>
<div style="position:absolute;left:333.1px;top:228.5px;width:1px;height:3px;background:#3e4046;"></div>
<div style="position:absolute;left:354.12px;top:231.5px;width:1px;height:241.5px;background:repeating-linear-gradient(to bottom,rgba(100,102,110,0.14) 0 1.5px,transparent 1.5px 3px)"></div>
<div style="position:absolute;left:354.12px;top:228.5px;width:1px;height:3px;background:#3e4046;"></div>
<div style="position:absolute;left:375.14px;top:231.5px;width:1px;height:241.5px;background:repeating-linear-gradient(to bottom,rgba(120,122,130,0.3) 0 1.5px,transparent 1.5px 3px)"></div>
<div style="position:absolute;left:375.14px;top:228.5px;width:1px;height:3px;background:#3e4046;"></div>
<div style="position:absolute;left:396.16px;top:231.5px;width:1px;height:241.5px;background:repeating-linear-gradient(to bottom,rgba(100,102,110,0.14) 0 1.5px,transparent 1.5px 3px)"></div>
<div style="position:absolute;left:396.16px;top:228.5px;width:1px;height:3px;background:#3e4046;"></div>
<div style="position:absolute;left:417.18px;top:231.5px;width:1px;height:241.5px;background:repeating-linear-gradient(to bottom,rgba(100,102,110,0.14) 0 1.5px,transparent 1.5px 3px)"></div>
<div style="position:absolute;left:417.18px;top:228.5px;width:1px;height:3px;background:#3e4046;"></div>
<div style="position:absolute;left:438.2px;top:231.5px;width:1px;height:241.5px;background:repeating-linear-gradient(to bottom,rgba(100,102,110,0.14) 0 1.5px,transparent 1.5px 3px)"></div>
<div style="position:absolute;left:438.2px;top:228.5px;width:1px;height:3px;background:#3e4046;"></div>
<div style="position:absolute;left:459.22px;top:231.5px;width:1px;height:241.5px;background:repeating-linear-gradient(to bottom,rgba(120,122,130,0.3) 0 1.5px,transparent 1.5px 3px)"></div>
<div style="position:absolute;left:459.22px;top:228.5px;width:1px;height:3px;background:#3e4046;"></div>
<div style="position:absolute;left:480.24px;top:231.5px;width:1px;height:241.5px;background:repeating-linear-gradient(to bottom,rgba(100,102,110,0.14) 0 1.5px,transparent 1.5px 3px)"></div>
<div style="position:absolute;left:480.24px;top:228.5px;width:1px;height:3px;background:#3e4046;"></div>
<div style="position:absolute;left:501.26px;top:231.5px;width:1px;height:241.5px;background:repeating-linear-gradient(to bottom,rgba(100,102,110,0.14) 0 1.5px,transparent 1.5px 3px)"></div>
<div style="position:absolute;left:501.26px;top:228.5px;width:1px;height:3px;background:#3e4046;"></div>
<div style="position:absolute;left:522.28px;top:231.5px;width:1px;height:241.5px;background:repeating-linear-gradient(to bottom,rgba(100,102,110,0.14) 0 1.5px,transparent 1.5px 3px)"></div>
<div style="position:absolute;left:522.28px;top:228.5px;width:1px;height:3px;background:#3e4046;"></div>
<div style="position:absolute;left:543.3px;top:231.5px;width:1px;height:241.5px;background:repeating-linear-gradient(to bottom,rgba(120,122,130,0.3) 0 1.5px,transparent 1.5px 3px)"></div>
<div style="position:absolute;left:543.3px;top:228.5px;width:1px;height:3px;background:#3e4046;"></div>
<div style="position:absolute;left:564.3199999999999px;top:231.5px;width:1px;height:241.5px;background:repeating-linear-gradient(to bottom,rgba(100,102,110,0.14) 0 1.5px,transparent 1.5px 3px)"></div>
<div style="position:absolute;left:564.3199999999999px;top:228.5px;width:1px;height:3px;background:#3e4046;"></div>
<div style="position:absolute;left:585.3399999999999px;top:231.5px;width:1px;height:241.5px;background:repeating-linear-gradient(to bottom,rgba(100,102,110,0.14) 0 1.5px,transparent 1.5px 3px)"></div>
<div style="position:absolute;left:585.3399999999999px;top:228.5px;width:1px;height:3px;background:#3e4046;"></div>
<div style="position:absolute;left:40.82px;top:226.8px;font-size:4.1px;line-height:4.1px;color:#8d9096;font-weight:normal;white-space:nowrap;will-change:transform;">23.2</div>
<div style="position:absolute;left:124.89999999999999px;top:226.8px;font-size:4.1px;line-height:4.1px;color:#8d9096;font-weight:normal;white-space:nowrap;will-change:transform;">23.3</div>
<div style="position:absolute;left:208.98000000000002px;top:226.8px;font-size:4.1px;line-height:4.1px;color:#8d9096;font-weight:normal;white-space:nowrap;will-change:transform;">23.4</div>
<div style="position:absolute;left:291.06px;top:212px;width:1px;height:19px;background:rgba(150,152,160,0.45);"></div>
<div style="position:absolute;left:293.06px;top:226.5px;font-size:5.2px;line-height:5.2px;color:#e6e6e6;font-weight:bold;white-space:nowrap;will-change:transform;">24</div>
<div style="position:absolute;left:377.14px;top:226.8px;font-size:4.1px;line-height:4.1px;color:#8d9096;font-weight:normal;white-space:nowrap;will-change:transform;">24.2</div>
<div style="position:absolute;left:461.22px;top:226.8px;font-size:4.1px;line-height:4.1px;color:#8d9096;font-weight:normal;white-space:nowrap;will-change:transform;">24.3</div>
<div style="position:absolute;left:545.3px;top:226.8px;font-size:4.1px;line-height:4.1px;color:#8d9096;font-weight:normal;white-space:nowrap;will-change:transform;">24.4</div>
<div style="position:absolute;left:0px;top:472.8px;width:600px;height:3.6px;background:#1e1f24;"></div>
<div style="position:absolute;left:0px;top:472.8px;width:467px;height:3.6px;background:#2c2e34;"></div>
<div style="position:absolute;left:468.5px;top:473.2px;width:3px;height:3px;border-radius:50%;background:#34363c"></div>
<div style="position:absolute;left:7.8px;top:229.5px;width:1.1px;height:247px;background:#6b6e86;"></div>
<div style="position:absolute;left:32px;top:386.2px;width:11.700000000000003px;height:18.0px;background:#714244;"></div>
<div style="position:absolute;left:43.7px;top:386.2px;width:50.5px;height:18.0px;background:#e18587;"></div>
<div style="position:absolute;left:94.2px;top:386.2px;width:16.099999999999994px;height:18.0px;background:#714244;"></div>
<div style="position:absolute;left:101.9px;top:333.9px;width:8.099999999999994px;height:17.400000000000034px;background:#714244;"></div>
<div style="position:absolute;left:110px;top:333.9px;width:29.30000000000001px;height:17.400000000000034px;background:#e18587;"></div>
<div style="position:absolute;left:139.3px;top:333.9px;width:28.0px;height:17.400000000000034px;background:#714244;"></div>
<div style="position:absolute;left:153.6px;top:263.2px;width:13.0px;height:18.0px;background:#714244;"></div>
<div style="position:absolute;left:166.6px;top:263.2px;width:49.0px;height:18.0px;background:#e18587;"></div>
<div style="position:absolute;left:205.2px;top:281.2px;width:10.100000000000023px;height:17.80000000000001px;background:#714244;"></div>
<div style="position:absolute;left:215.3px;top:281.2px;width:32.79999999999998px;height:17.80000000000001px;background:#e18587;"></div>
<div style="position:absolute;left:260px;top:333.8px;width:27px;height:17.5px;background:#964a4b;"></div>
<div style="position:absolute;left:287px;top:333.8px;width:22.19999999999999px;height:17.5px;background:#e18587;"></div>
<div style="position:absolute;left:308.8px;top:298.6px;width:27.399999999999977px;height:17.599999999999966px;background:#e18587;"></div>
<div style="position:absolute;left:335.9px;top:333.8px;width:28.80000000000001px;height:17.5px;background:#e18587;"></div>
<div style="position:absolute;left:364.7px;top:298.6px;width:36.0px;height:17.599999999999966px;background:#e18587;"></div>
<div style="position:absolute;left:400.7px;top:333.8px;width:33.30000000000001px;height:17.5px;background:#e18587;"></div>
<div style="position:absolute;left:434px;top:298.6px;width:48.39999999999998px;height:17.599999999999966px;background:#e18587;"></div>
<div style="position:absolute;left:482.4px;top:333.8px;width:72.10000000000002px;height:17.5px;background:#e18587;"></div>
<div style="position:absolute;left:522px;top:333.8px;width:0.8px;height:17.5px;background:rgba(60,20,20,0.6);"></div>
<div style="position:absolute;left:554.5px;top:298.8px;width:21.700000000000045px;height:17.399999999999977px;background:#e18587;"></div>
<div style="position:absolute;left:576.2px;top:298.8px;width:23.799999999999955px;height:17.399999999999977px;background:#714244;"></div>
<div style="position:absolute;left:44.2px;top:381.8px;font-size:5.8px;line-height:5.8px;color:#b0b2b8;font-weight:normal;white-space:nowrap;will-change:transform;letter-spacing:0.25px;transform:scale(0.79);transform-origin:0 0;">*[ih][ay][v]</div>
<div style="position:absolute;left:110.2px;top:328.8px;font-size:5.8px;line-height:5.8px;color:#b0b2b8;font-weight:normal;white-space:nowrap;will-change:transform;transform:scale(0.79);transform-origin:0 0;">[b][ih]*[n]</div>
<div style="position:absolute;left:167px;top:258.8px;font-size:5.8px;line-height:5.8px;color:#b0b2b8;font-weight:normal;white-space:nowrap;will-change:transform;transform:scale(0.79);transform-origin:0 0;">[r][i][li]</div>
<div style="position:absolute;left:216px;top:276.6px;font-size:5.8px;line-height:5.8px;color:#b0b2b8;font-weight:normal;white-space:nowrap;will-change:transform;transform:scale(0.79);transform-origin:0 0;">[l][iy]</div>
<div style="position:absolute;left:287px;top:328.8px;font-size:5.8px;line-height:5.8px;color:#b0b2b8;font-weight:normal;white-space:nowrap;will-change:transform;transform:scale(0.79);transform-origin:0 0;">[tr][ay]</div>
<div style="position:absolute;left:523px;top:328.8px;font-size:5.8px;line-height:5.8px;color:#b0b2b8;font-weight:normal;white-space:nowrap;will-change:transform;transform:scale(0.79);transform-origin:0 0;">[ih][ng]</div>
<div style="position:absolute;left:45px;top:393.3px;font-size:5.2px;line-height:5.2px;color:#2a1214;font-weight:normal;white-space:nowrap;will-change:transform;transform:scale(0.79);transform-origin:0 0;">I've</div>
<div style="position:absolute;left:112px;top:341.5px;font-size:5.2px;line-height:5.2px;color:#2a1214;font-weight:normal;white-space:nowrap;will-change:transform;transform:scale(0.79);transform-origin:0 0;">been</div>
<div style="position:absolute;left:168px;top:271.3px;font-size:5.2px;line-height:5.2px;color:#2a1214;font-weight:normal;white-space:nowrap;will-change:transform;transform:scale(0.79);transform-origin:0 0;">really#1</div>
<div style="position:absolute;left:217px;top:288.5px;font-size:5.2px;line-height:5.2px;color:#2a1214;font-weight:normal;white-space:nowrap;will-change:transform;transform:scale(0.79);transform-origin:0 0;">really#2</div>
<div style="position:absolute;left:288px;top:341.5px;font-size:5.2px;line-height:5.2px;color:#2a1214;font-weight:normal;white-space:nowrap;will-change:transform;transform:scale(0.79);transform-origin:0 0;">trying#1</div>
<div style="position:absolute;left:524px;top:341.5px;font-size:5.2px;line-height:5.2px;color:#2a1214;font-weight:normal;white-space:nowrap;will-change:transform;transform:scale(0.79);transform-origin:0 0;">trying#2</div>
<div style="position:absolute;left:311px;top:305px;font-size:4.5px;line-height:4.5px;color:#3a1c1e;font-weight:normal;white-space:nowrap;will-change:transform;">-</div>
<div style="position:absolute;left:338px;top:340.5px;font-size:4.5px;line-height:4.5px;color:#3a1c1e;font-weight:normal;white-space:nowrap;will-change:transform;">-</div>
<div style="position:absolute;left:367px;top:305px;font-size:4.5px;line-height:4.5px;color:#3a1c1e;font-weight:normal;white-space:nowrap;will-change:transform;">-</div>
<div style="position:absolute;left:403px;top:340.5px;font-size:4.5px;line-height:4.5px;color:#3a1c1e;font-weight:normal;white-space:nowrap;will-change:transform;">-</div>
<div style="position:absolute;left:437px;top:305px;font-size:4.5px;line-height:4.5px;color:#3a1c1e;font-weight:normal;white-space:nowrap;will-change:transform;">-</div>
<div style="position:absolute;left:484px;top:340.5px;font-size:4.5px;line-height:4.5px;color:#3a1c1e;font-weight:normal;white-space:nowrap;will-change:transform;">-</div>
<div style="position:absolute;left:557px;top:305px;font-size:4.5px;line-height:4.5px;color:#3a1c1e;font-weight:normal;white-space:nowrap;will-change:transform;">-</div>
<div style="position:absolute;left:47.5px;top:412.6px;font-size:6.3px;line-height:6.3px;color:#8e9096;font-weight:normal;white-space:nowrap;will-change:transform;">I've been really</div>
<div style="position:absolute;left:291px;top:360.3px;font-size:7px;line-height:7px;color:#8e9096;font-weight:normal;white-space:nowrap;will-change:transform;">trying</div>
<svg style="position:absolute;left:0;top:0" width="600" height="600"><path d="M44.2 478 C44.5 473.3 45.2 460.3 46.0 450.0 C46.8 439.7 48.0 423.5 48.8 416.0 C49.5 408.5 49.9 407.4 50.5 405.0 C51.1 402.6 51.6 402.0 52.4 401.6 C53.1 401.2 53.8 401.2 55.0 402.5 C56.2 403.8 58.3 409.0 59.8 409.4 C61.3 409.8 62.6 407.1 64.0 405.0 C65.4 402.9 66.7 398.9 68.0 397.0 C69.3 395.1 70.4 393.8 71.7 393.5 C73.0 393.2 74.5 394.3 76.0 395.0 C77.5 395.7 79.2 397.7 80.9 397.5 C82.6 397.3 84.5 395.4 86.0 394.0 C87.5 392.6 88.9 390.1 90.0 389.0 C91.1 387.9 92.1 386.9 92.8 387.4 C93.5 387.9 93.5 388.8 94.0 392.0 C94.5 395.2 94.8 401.7 95.5 406.7 C96.2 411.7 97.2 417.4 98.0 422.0 C98.8 426.6 99.2 430.7 100.0 434.0 C100.8 437.3 101.9 440.2 103.0 442.0 C104.1 443.8 105.7 446.1 106.6 444.9 C107.5 443.7 108.0 438.3 108.5 435.0 C109.0 431.7 109.0 430.8 109.3 425.0 C109.5 419.2 109.8 409.2 110.0 400.0 C110.2 390.8 110.3 378.3 110.6 370.0 C110.8 361.7 111.0 356.0 111.5 350.0 C112.0 344.0 112.9 336.2 113.8 333.8 C114.6 331.3 115.2 334.0 116.7 335.5 C118.2 337.0 120.7 340.8 122.5 342.5 C124.3 344.2 126.0 346.0 127.8 346.0 C129.5 346.0 131.5 343.5 133.0 342.5 C134.5 341.5 135.4 340.2 136.5 340.2 C137.6 340.2 138.4 342.5 139.4 342.5 C140.4 342.5 141.0 339.9 142.3 340.2 C143.6 340.5 145.2 342.4 147.0 344.3 C148.8 346.2 151.0 349.8 152.8 351.8 C154.7 353.8 156.5 356.3 158.1 356.3 C159.7 356.3 161.1 354.5 162.2 351.8 C163.3 349.1 163.8 344.5 164.5 340.2 C165.2 335.9 165.7 332.1 166.2 326.2 C166.8 320.3 167.5 310.5 168.0 305.0 C168.5 299.5 168.7 298.1 169.3 293.3 C169.9 288.5 170.6 279.6 171.5 276.0 C172.4 272.4 173.1 272.6 174.8 271.7 C176.5 270.8 179.3 270.8 181.7 270.8 C184.1 270.8 185.9 271.6 189.0 271.7 C192.1 271.8 197.5 271.5 200.0 271.7 C202.5 271.9 202.6 271.9 204.0 273.0 C205.4 274.1 206.8 276.6 208.3 278.3 C209.9 280.0 211.8 282.1 213.3 283.3 C214.8 284.6 215.9 285.0 217.5 285.8 C219.1 286.6 220.9 287.5 223.0 288.3 C225.1 289.1 228.3 290.7 230.0 290.8 C231.7 290.9 231.9 289.8 233.0 289.0 C234.1 288.2 235.1 287.0 236.7 285.8 C238.3 284.6 241.1 282.0 242.5 281.7 C243.9 281.4 244.4 282.9 245.0 284.0 C245.6 285.1 245.5 285.6 245.8 288.3 C246.1 291.0 246.5 296.1 246.8 300.0 C247.1 303.9 247.4 309.8 247.5 311.7" stroke="rgba(230,230,235,0.5)" stroke-width="0.9" fill="none"/><path d="M287 337 C287.7 337.3 289.3 338.6 291.0 339.0 C292.7 339.4 294.8 339.8 297.0 339.6 C299.2 339.4 302.2 339.1 304.0 338.0 C305.8 336.9 306.8 335.3 308.0 333.0 C309.2 330.7 310.2 326.8 311.0 324.0 C311.8 321.2 312.2 318.8 313.0 316.0 C313.8 313.2 314.8 308.9 316.0 307.0 C317.2 305.1 318.2 304.6 320.0 304.4 C321.8 304.2 325.0 305.1 327.0 306.0 C329.0 306.9 330.7 307.7 332.0 310.0 C333.3 312.3 334.0 316.8 335.0 320.0 C336.0 323.2 337.0 326.3 338.0 329.0 C339.0 331.7 339.2 333.3 341.0 336.0 C342.8 338.7 346.7 343.7 349.0 345.0 C351.3 346.3 353.2 344.8 355.0 344.0 C356.8 343.2 358.7 341.5 360.0 340.0 C361.3 338.5 361.8 337.7 363.0 335.0 C364.2 332.3 365.7 327.8 367.0 324.0 C368.3 320.2 369.8 315.8 371.0 312.0 C372.2 308.2 373.2 303.3 374.0 301.0 C374.8 298.7 375.0 298.0 376.0 298.0 C377.0 298.0 378.3 299.5 380.0 301.0 C381.7 302.5 384.0 305.9 386.0 307.0 C388.0 308.1 390.3 306.8 392.0 307.6 C393.7 308.4 394.7 309.6 396.0 312.0 C397.3 314.4 398.7 318.0 400.0 322.0 C401.3 326.0 402.3 332.4 404.0 336.0 C405.7 339.6 407.3 342.3 410.0 343.6 C412.7 344.9 417.0 344.1 420.0 344.0 C423.0 343.9 426.0 344.3 428.0 343.0 C430.0 341.7 430.8 339.5 432.0 336.0 C433.2 332.5 433.8 326.7 435.0 322.0 C436.2 317.3 437.5 311.8 439.0 308.0 C440.5 304.2 442.5 300.0 444.0 299.0 C445.5 298.0 446.0 300.3 448.0 302.0 C450.0 303.7 453.7 308.2 456.0 309.0 C458.3 309.8 459.8 307.7 462.0 307.0 C464.2 306.3 467.0 305.0 469.0 305.0 C471.0 305.0 472.5 305.3 474.0 307.0 C475.5 308.7 476.9 312.4 478.0 315.0 C479.1 317.6 479.6 318.7 480.8 322.5 C482.0 326.3 483.4 333.9 485.0 337.7 C486.6 341.5 488.4 344.4 490.6 345.3 C492.8 346.2 494.3 343.6 498.0 343.0 C501.7 342.4 509.0 342.0 513.0 342.0 C517.0 342.0 518.7 343.0 522.0 343.0 C525.3 343.0 529.2 342.0 532.8 342.0 C536.4 342.0 540.8 343.4 543.7 343.0 C546.6 342.6 548.4 342.1 550.0 339.8 C551.6 337.5 552.3 333.3 553.4 329.0 C554.5 324.7 555.4 317.6 556.7 313.8 C558.0 310.0 559.2 307.6 561.0 306.3 C562.8 305.1 565.3 305.8 567.5 306.3 C569.7 306.8 571.8 308.4 574.0 309.5 C576.2 310.6 578.2 313.1 580.5 312.7 C582.8 312.3 585.8 308.0 588.0 307.3 C590.2 306.6 591.5 307.1 593.5 308.4 C595.5 309.7 598.9 313.9 600.0 315.0" stroke="rgba(245,228,228,0.45)" stroke-width="0.9" fill="none"/></svg>
<div style="position:absolute;left:0px;top:476.4px;width:600px;height:1.6px;background:#18191d;"></div>
<div style="position:absolute;left:0px;top:478px;width:600px;height:61px;background:#1c1d22;"></div>
<div style="position:absolute;left:0px;top:491.2px;width:600px;height:1px;background:rgba(110,60,60,0.18);"></div>
<div style="position:absolute;left:0px;top:526.2px;width:600px;height:1px;background:rgba(110,60,60,0.18);"></div>
<svg style="position:absolute;left:0;top:0" width="600" height="600"><path d="M0 539 L0 535 L20 535.3 L30 536.3 L33 536.7 L36 535 L40 531 L43 520 L48 515.3 L55 515.3 L60 516 L68 518 L80 519 L93 520 L97 524 L101 526.5 L104 527.7 L106 526 L108 522 L112 515.7 L116 516.5 L120 518 L130 519 L160 518.7 L175 517.5 L200 516.7 L240 517.5 L243.3 520 L248.3 532 L255 535.5 L260 536.7 L265 535 L270 532 L276.7 530 L282.7 531.7 L286 525 L288.3 514 L291.7 513.3 L300 516 L306.7 519 L313.3 518 L333.3 519 L346.7 520 L363.3 522 L373.3 520 L386.7 519 L400 520 L430 521.5 L433 523 L440 522 L470 521 L500 520 L520 519 L540 520 L555 521 L565 518 L580 519 L590 522 L600 528 L600 539 Z" fill="#453134"/></svg>
<div style="position:absolute;left:0px;top:526.2px;width:600px;height:1px;background:rgba(140,70,70,0.25);"></div>
<div style="position:absolute;left:31.799999999999997px;top:478px;width:1px;height:61px;background:rgba(170,90,90,0.3);"></div>
<div style="position:absolute;left:101.8px;top:478px;width:1px;height:61px;background:rgba(170,90,90,0.3);"></div>
<div style="position:absolute;left:153.5px;top:478px;width:1px;height:61px;background:rgba(170,90,90,0.3);"></div>
<div style="position:absolute;left:204.5px;top:478px;width:1px;height:61px;background:rgba(170,90,90,0.3);"></div>
<div style="position:absolute;left:259.5px;top:478px;width:1px;height:61px;background:rgba(170,90,90,0.3);"></div>
<div style="position:absolute;left:308.8px;top:478px;width:1px;height:61px;background:rgba(170,90,90,0.3);"></div>
<div style="position:absolute;left:335.5px;top:478px;width:1px;height:61px;background:rgba(170,90,90,0.3);"></div>
<div style="position:absolute;left:363.8px;top:478px;width:1px;height:61px;background:rgba(170,90,90,0.3);"></div>
<div style="position:absolute;left:432.8px;top:478px;width:1px;height:61px;background:rgba(170,90,90,0.3);"></div>
<div style="position:absolute;left:482.2px;top:478px;width:1px;height:61px;background:rgba(170,90,90,0.3);"></div>
<div style="position:absolute;left:522.2px;top:478px;width:1px;height:61px;background:rgba(170,90,90,0.3);"></div>
<div style="position:absolute;left:554.5px;top:478px;width:1px;height:61px;background:rgba(170,90,90,0.3);"></div>
<div style="position:absolute;left:0px;top:508.2px;width:600px;height:1.6px;background:#7c5456;"></div>
<div style="position:absolute;left:0px;top:539px;width:600px;height:1.5px;background:#2a2c33;"></div>
<div style="position:absolute;left:0px;top:540.5px;width:600px;height:16px;background:#1e1f24;"></div>
<div style="position:absolute;left:377px;top:541px;width:32px;height:12px;background:#2d3039;border-radius:2px"></div>
<div style="position:absolute;left:246px;top:545.3px;font-size:4.4px;line-height:4.4px;color:#8a8d94;font-weight:normal;white-space:nowrap;will-change:transform;">Breath</div>
<div style="position:absolute;left:291px;top:545.3px;font-size:4.4px;line-height:4.4px;color:#8a8d94;font-weight:normal;white-space:nowrap;will-change:transform;">Air</div>
<div style="position:absolute;left:319px;top:545.3px;font-size:4.4px;line-height:4.4px;color:#8a8d94;font-weight:normal;white-space:nowrap;will-change:transform;">Falsetto</div>
<div style="position:absolute;left:352.4px;top:545.3px;font-size:4.4px;line-height:4.4px;color:#8a8d94;font-weight:normal;white-space:nowrap;will-change:transform;">Tension</div>
<div style="position:absolute;left:386px;top:545.3px;font-size:4.2px;line-height:4.2px;color:#f0f0f0;font-weight:bold;white-space:nowrap;will-change:transform;">Energy</div>
<div style="position:absolute;left:426.4px;top:545.3px;font-size:4.4px;line-height:4.4px;color:#8a8d94;font-weight:normal;white-space:nowrap;will-change:transform;">Formant</div>
<div style="position:absolute;left:272.3px;top:544px;width:0.8px;height:6px;background:#3a3c44;"></div>
<div style="position:absolute;left:413.3px;top:544px;width:0.8px;height:6px;background:#3a3c44;"></div>
<div style="position:absolute;left:0;top:556px;width:600px;height:44px;background:linear-gradient(to bottom,#000 0px,#050505 12px,#0c0c0c 24px,#161616 29px,#2c2c2c 33px,#505050 36px,#a0a0a0 38px,#f0f0f0 40px,#ffffff 41.2px,#000 41.6px,#000 44px)"></div>
<svg style="position:absolute;left:0;top:556px;mix-blend-mode:multiply" width="600" height="44"><filter id="nz2" x="0" y="0" width="100%" height="100%"><feTurbulence type="fractalNoise" baseFrequency="0.9" numOctaves="1" seed="11"/><feColorMatrix type="matrix" values="0 0 0 0 0  0 0 0 0 0  0 0 0 0 0  0 0 0 -2.2 1.3"/></filter><rect width="600" height="44" fill="#fff"/><rect width="600" height="44" filter="url(#nz2)" fill="#000"/></svg>
</div></body></html>
